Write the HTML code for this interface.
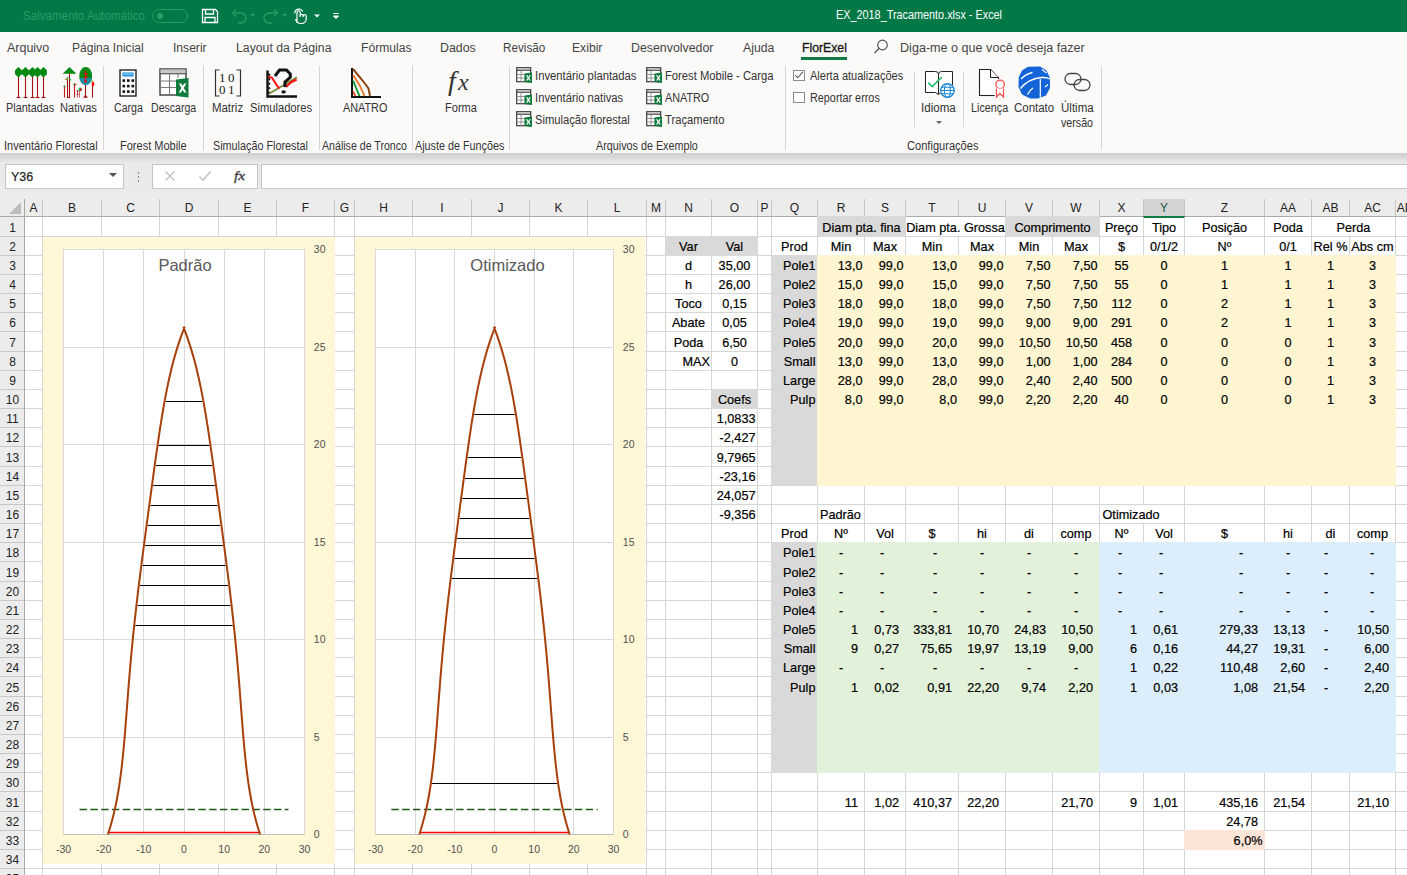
<!DOCTYPE html><html><head><meta charset="utf-8"><style>
html,body{margin:0;padding:0;}
body{width:1407px;height:875px;overflow:hidden;position:relative;background:#fff;font-family:"Liberation Sans",sans-serif;}
#root>div,#root>svg{position:absolute;}
.t{position:absolute;white-space:nowrap;line-height:1;}
</style></head><body><div id="root">

<div style="left:0px;top:0px;width:1407px;height:32px;background:#017846;"></div>
<div class="t" style="left:22.50px;top:9.84px;font-size:12px;color:#23a064;transform:scaleX(0.9677);transform-origin:0 0;">Salvamento Automático</div>
<div style="left:151.5px;top:8.5px;width:36px;height:14.5px;border:1px solid #23a064;border-radius:8px;box-sizing:border-box;"></div>
<div style="left:156.5px;top:13px;width:6px;height:6px;background:#23a064;border-radius:50%;"></div>
<svg style="left:200px;top:7px" width="20" height="18" viewBox="0 0 20 18"><path d="M2.5 2.5h13l2 2v11h-15z" fill="none" stroke="#fff" stroke-width="1.3"/><path d="M5.5 2.5v4.5h8v-4.5" fill="none" stroke="#fff" stroke-width="1.3"/><path d="M5 15.5v-5h10v5" fill="none" stroke="#fff" stroke-width="1.3"/></svg>
<svg style="left:229px;top:7px" width="60" height="18" viewBox="0 0 60 18"><path d="M4 6h8a5 5 0 0 1 0 10h-3" fill="none" stroke="#23a064" stroke-width="1.3"/><path d="M7 2.5L3.5 6 7 9.5" fill="none" stroke="#23a064" stroke-width="1.3"/><path d="M21 7l2.5 3 2.5-3z" fill="#23a064"/><path d="M48 6h-8a5 5 0 0 0 0 10h3" fill="none" stroke="#23a064" stroke-width="1.3"/><path d="M45 2.5L48.5 6 45 9.5" fill="none" stroke="#23a064" stroke-width="1.3"/><path d="M53 7l2.5 3 2.5-3z" fill="#23a064"/></svg>
<svg style="left:292px;top:6px" width="50" height="20" viewBox="0 0 50 20"><path d="M5 17V6.5a1.6 1.6 0 0 1 3.2 0V11m0-1.2a1.5 1.5 0 0 1 3 0V11m0-.8a1.5 1.5 0 0 1 3 0V12.5c0 3-2 5-4.5 5H8.5C6.5 17.5 4 15.5 3.5 13" fill="none" stroke="#fff" stroke-width="1.2"/><path d="M2.8 7.5a4.2 4.2 0 0 1 8-2" fill="none" stroke="#fff" stroke-width="1.2"/><path d="M22 8.5l3 3 3-3z" fill="#fff"/><path d="M41.5 7.5h5M41.5 10l2.5 2.5 2.5-2.5z" fill="#fff" stroke="#fff" stroke-width="1"/></svg>
<div class="t" style="left:836.30px;top:8.84px;font-size:12px;color:#fff;transform:scaleX(0.9039);transform-origin:0 0;">EX_2018_Tracamento.xlsx  -  Excel</div>
<div style="left:0px;top:32px;width:1407px;height:121px;background:#fbfaf9;"></div>
<div class="t" style="left:7.00px;top:41.84px;font-size:12px;color:#444;transform:scaleX(1.0396);transform-origin:0 0;">Arquivo</div>
<div class="t" style="left:72.10px;top:41.84px;font-size:12px;color:#444;transform:scaleX(1.0043);transform-origin:0 0;">Página Inicial</div>
<div class="t" style="left:172.90px;top:41.84px;font-size:12px;color:#444;transform:scaleX(1.0077);transform-origin:0 0;">Inserir</div>
<div class="t" style="left:235.80px;top:41.84px;font-size:12px;color:#444;transform:scaleX(1.0222);transform-origin:0 0;">Layout da Página</div>
<div class="t" style="left:361.20px;top:41.84px;font-size:12px;color:#444;transform:scaleX(1.0097);transform-origin:0 0;">Fórmulas</div>
<div class="t" style="left:440.30px;top:41.84px;font-size:12px;color:#444;transform:scaleX(1.0321);transform-origin:0 0;">Dados</div>
<div class="t" style="left:502.50px;top:41.84px;font-size:12px;color:#444;transform:scaleX(0.9756);transform-origin:0 0;">Revisão</div>
<div class="t" style="left:572.10px;top:41.84px;font-size:12px;color:#444;transform:scaleX(1.0128);transform-origin:0 0;">Exibir</div>
<div class="t" style="left:631.00px;top:41.84px;font-size:12px;color:#444;transform:scaleX(1.0294);transform-origin:0 0;">Desenvolvedor</div>
<div class="t" style="left:743.20px;top:41.84px;font-size:12px;color:#444;transform:scaleX(1.0194);transform-origin:0 0;">Ajuda</div>
<div class="t" style="left:801.50px;top:41.84px;font-size:12px;color:#1a1a1a;transform:scaleX(1.0201);transform-origin:0 0;-webkit-text-stroke:0.35px #1a1a1a;">FlorExel</div>
<div style="left:801px;top:57px;width:46px;height:2.5px;background:#107c41;"></div>
<svg style="left:872px;top:38px" width="18" height="18" viewBox="0 0 18 18"><circle cx="10.5" cy="7" r="4.8" fill="none" stroke="#555" stroke-width="1.2"/><path d="M7 10.5L2.5 15" stroke="#555" stroke-width="1.3"/></svg>
<div class="t" style="left:899.60px;top:41.84px;font-size:12px;color:#444;transform:scaleX(1.0493);transform-origin:0 0;">Diga-me o que você deseja fazer</div>
<div class="t" style="left:6.40px;top:101.74px;font-size:12px;color:#333;transform:scaleX(0.9030);transform-origin:0 0;">Plantadas</div>
<div class="t" style="left:59.80px;top:101.74px;font-size:12px;color:#333;transform:scaleX(0.9221);transform-origin:0 0;">Nativas</div>
<div class="t" style="left:113.70px;top:101.74px;font-size:12px;color:#333;transform:scaleX(0.8841);transform-origin:0 0;">Carga</div>
<div class="t" style="left:150.80px;top:101.74px;font-size:12px;color:#333;transform:scaleX(0.8801);transform-origin:0 0;">Descarga</div>
<div class="t" style="left:212.20px;top:101.74px;font-size:12px;color:#333;transform:scaleX(0.9519);transform-origin:0 0;">Matriz</div>
<div class="t" style="left:250.20px;top:101.74px;font-size:12px;color:#333;transform:scaleX(0.9310);transform-origin:0 0;">Simuladores</div>
<div class="t" style="left:343.40px;top:101.74px;font-size:12px;color:#333;transform:scaleX(0.9038);transform-origin:0 0;">ANATRO</div>
<div class="t" style="left:445.30px;top:101.74px;font-size:12px;color:#333;transform:scaleX(0.9201);transform-origin:0 0;">Forma</div>
<div class="t" style="left:921.40px;top:101.74px;font-size:12px;color:#333;transform:scaleX(0.9658);transform-origin:0 0;">Idioma</div>
<div class="t" style="left:970.80px;top:101.74px;font-size:12px;color:#333;transform:scaleX(0.8991);transform-origin:0 0;">Licença</div>
<div class="t" style="left:1013.80px;top:101.74px;font-size:12px;color:#333;transform:scaleX(0.9541);transform-origin:0 0;">Contato</div>
<div class="t" style="left:1060.70px;top:101.74px;font-size:12px;color:#333;transform:scaleX(0.9613);transform-origin:0 0;">Última</div>
<div class="t" style="left:1061.40px;top:116.64px;font-size:12px;color:#333;transform:scaleX(0.8881);transform-origin:0 0;">versão</div>
<div class="t" style="left:3.70px;top:139.94px;font-size:12px;color:#333;transform:scaleX(0.9182);transform-origin:0 0;">Inventário Florestal</div>
<div class="t" style="left:119.70px;top:139.94px;font-size:12px;color:#333;transform:scaleX(0.9174);transform-origin:0 0;">Forest Mobile</div>
<div class="t" style="left:213.00px;top:139.94px;font-size:12px;color:#333;transform:scaleX(0.8996);transform-origin:0 0;">Simulação Florestal</div>
<div class="t" style="left:322.40px;top:139.94px;font-size:12px;color:#333;transform:scaleX(0.8848);transform-origin:0 0;">Análise de Tronco</div>
<div class="t" style="left:415.40px;top:139.94px;font-size:12px;color:#333;transform:scaleX(0.8993);transform-origin:0 0;">Ajuste de Funções</div>
<div class="t" style="left:595.60px;top:139.94px;font-size:12px;color:#333;transform:scaleX(0.8978);transform-origin:0 0;">Arquivos de Exemplo</div>
<div class="t" style="left:907.00px;top:139.94px;font-size:12px;color:#333;transform:scaleX(0.9239);transform-origin:0 0;">Configurações</div>
<div style="left:103px;top:66px;width:1px;height:84px;background:#d6d6d6;"></div>
<div style="left:203px;top:66px;width:1px;height:84px;background:#d6d6d6;"></div>
<div style="left:319px;top:66px;width:1px;height:84px;background:#d6d6d6;"></div>
<div style="left:412px;top:66px;width:1px;height:84px;background:#d6d6d6;"></div>
<div style="left:509px;top:66px;width:1px;height:84px;background:#d6d6d6;"></div>
<div style="left:785px;top:66px;width:1px;height:84px;background:#d6d6d6;"></div>
<div style="left:1101px;top:66px;width:1px;height:84px;background:#d6d6d6;"></div>
<div style="left:914px;top:71px;width:1px;height:56px;background:#d6d6d6;"></div>
<div style="left:963px;top:71px;width:1px;height:56px;background:#d6d6d6;"></div>
<div class="t" style="left:534.70px;top:69.64px;font-size:12px;color:#333;transform:scaleX(0.9391);transform-origin:0 0;">Inventário plantadas</div>
<div class="t" style="left:534.70px;top:91.74px;font-size:12px;color:#333;transform:scaleX(0.9377);transform-origin:0 0;">Inventário nativas</div>
<div class="t" style="left:534.70px;top:114.04px;font-size:12px;color:#333;transform:scaleX(0.9340);transform-origin:0 0;">Simulação florestal</div>
<div class="t" style="left:664.70px;top:69.64px;font-size:12px;color:#333;transform:scaleX(0.9350);transform-origin:0 0;">Forest Mobile - Carga</div>
<div class="t" style="left:664.70px;top:91.74px;font-size:12px;color:#333;transform:scaleX(0.9018);transform-origin:0 0;">ANATRO</div>
<div class="t" style="left:664.70px;top:114.04px;font-size:12px;color:#333;transform:scaleX(0.9356);transform-origin:0 0;">Traçamento</div>
<div style="left:793px;top:70px;width:12px;height:11px;border:1px solid #8a8a8a;box-sizing:border-box;background:#fff"></div>
<svg style="left:793px;top:69px" width="12" height="12" viewBox="0 0 12 12"><path d="M2.3 6.2l2.5 2.6 5-6" fill="none" stroke="#555" stroke-width="1.1"/></svg>
<div style="left:793px;top:91.5px;width:12px;height:11.5px;border:1px solid #8a8a8a;box-sizing:border-box;background:#fff"></div>
<div class="t" style="left:810.40px;top:69.64px;font-size:12px;color:#333;transform:scaleX(0.9192);transform-origin:0 0;">Alerta atualizações</div>
<div class="t" style="left:810.40px;top:91.74px;font-size:12px;color:#333;transform:scaleX(0.9021);transform-origin:0 0;">Reportar erros</div>
<svg style="left:935px;top:120px" width="8" height="5" viewBox="0 0 8 5"><path d="M1 1h6l-3 3z" fill="#666"/></svg>
<div style="left:0px;top:153px;width:1407px;height:46px;background:#eaeaea;"></div>
<div style="left:0px;top:153px;width:1407px;height:10px;background:linear-gradient(#cdcdcd,#eaeaea);"></div>
<div style="left:5px;top:164px;width:119px;height:25px;background:#fff;border:1px solid #c6c6c6;box-sizing:border-box;"></div>
<div class="t" style="left:11.00px;top:171.42px;font-size:12.5px;color:#222;-webkit-text-stroke:0.2px #222;">Y36</div>
<svg style="left:108px;top:172px" width="10" height="6" viewBox="0 0 10 6"><path d="M1 1h8l-4 4z" fill="#555"/></svg>
<div style="left:137.5px;top:172px;width:1.5px;height:1.5px;background:#888;"></div>
<div style="left:137.5px;top:176px;width:1.5px;height:1.5px;background:#888;"></div>
<div style="left:137.5px;top:180px;width:1.5px;height:1.5px;background:#888;"></div>
<div style="left:152px;top:164px;width:106px;height:25px;background:#fff;border:1px solid #c6c6c6;box-sizing:border-box;"></div>
<svg style="left:164px;top:170px" width="12" height="12" viewBox="0 0 12 12"><path d="M1.5 1.5l9 9M10.5 1.5l-9 9" stroke="#bdbdbd" stroke-width="1.2"/></svg>
<svg style="left:198px;top:170px" width="14" height="12" viewBox="0 0 14 12"><path d="M1.5 6.5l3.5 3.5 7.5-8.5" fill="none" stroke="#c4c4c4" stroke-width="1.6"/></svg>
<div class="t" style="left:234.00px;top:169.07px;font-size:13.5px;color:#3a3a3a;font-family:'Liberation Serif', serif;font-style:italic;transform:scaleX(1.1282);transform-origin:0 0;-webkit-text-stroke:0.3px #3a3a3a;">fx</div>
<div style="left:261px;top:164px;width:1150px;height:25px;background:#fff;border:1px solid #c6c6c6;box-sizing:border-box;"></div>
<div style="left:0px;top:189px;width:1407px;height:28px;background:#ececec;"></div>
<div style="left:0px;top:216px;width:1407px;height:1px;background:#ababab;"></div>
<svg style="left:8px;top:201px" width="14" height="14" viewBox="0 0 14 14"><path d="M13 1v12H1z" fill="#bcbcbc"/></svg>
<div style="left:1143px;top:199px;width:42px;height:17px;background:#d4d4d4;"></div>
<div style="left:1143px;top:216px;width:42px;height:2px;background:#107c41;"></div>
<div style="left:24px;top:199px;width:1px;height:17px;background:#c8c8c8;"></div>
<div style="left:42px;top:199px;width:1px;height:17px;background:#c8c8c8;"></div>
<div style="left:101px;top:199px;width:1px;height:17px;background:#c8c8c8;"></div>
<div style="left:159px;top:199px;width:1px;height:17px;background:#c8c8c8;"></div>
<div style="left:218px;top:199px;width:1px;height:17px;background:#c8c8c8;"></div>
<div style="left:276px;top:199px;width:1px;height:17px;background:#c8c8c8;"></div>
<div style="left:334px;top:199px;width:1px;height:17px;background:#c8c8c8;"></div>
<div style="left:354px;top:199px;width:1px;height:17px;background:#c8c8c8;"></div>
<div style="left:412px;top:199px;width:1px;height:17px;background:#c8c8c8;"></div>
<div style="left:471px;top:199px;width:1px;height:17px;background:#c8c8c8;"></div>
<div style="left:529px;top:199px;width:1px;height:17px;background:#c8c8c8;"></div>
<div style="left:587px;top:199px;width:1px;height:17px;background:#c8c8c8;"></div>
<div style="left:646px;top:199px;width:1px;height:17px;background:#c8c8c8;"></div>
<div style="left:665px;top:199px;width:1px;height:17px;background:#c8c8c8;"></div>
<div style="left:711px;top:199px;width:1px;height:17px;background:#c8c8c8;"></div>
<div style="left:757px;top:199px;width:1px;height:17px;background:#c8c8c8;"></div>
<div style="left:771px;top:199px;width:1px;height:17px;background:#c8c8c8;"></div>
<div style="left:817px;top:199px;width:1px;height:17px;background:#c8c8c8;"></div>
<div style="left:864px;top:199px;width:1px;height:17px;background:#c8c8c8;"></div>
<div style="left:905px;top:199px;width:1px;height:17px;background:#c8c8c8;"></div>
<div style="left:958px;top:199px;width:1px;height:17px;background:#c8c8c8;"></div>
<div style="left:1005px;top:199px;width:1px;height:17px;background:#c8c8c8;"></div>
<div style="left:1052px;top:199px;width:1px;height:17px;background:#c8c8c8;"></div>
<div style="left:1099px;top:199px;width:1px;height:17px;background:#c8c8c8;"></div>
<div style="left:1143px;top:199px;width:1px;height:17px;background:#c8c8c8;"></div>
<div style="left:1184px;top:199px;width:1px;height:17px;background:#c8c8c8;"></div>
<div style="left:1264px;top:199px;width:1px;height:17px;background:#c8c8c8;"></div>
<div style="left:1311px;top:199px;width:1px;height:17px;background:#c8c8c8;"></div>
<div style="left:1349px;top:199px;width:1px;height:17px;background:#c8c8c8;"></div>
<div style="left:1395px;top:199px;width:1px;height:17px;background:#c8c8c8;"></div>
<div class="t" style="left:29.49px;top:201.84px;font-size:12px;color:#222;">A</div>
<div class="t" style="left:67.99px;top:201.84px;font-size:12px;color:#222;">B</div>
<div class="t" style="left:126.16px;top:201.84px;font-size:12px;color:#222;">C</div>
<div class="t" style="left:184.66px;top:201.84px;font-size:12px;color:#222;">D</div>
<div class="t" style="left:243.49px;top:201.84px;font-size:12px;color:#222;">E</div>
<div class="t" style="left:301.83px;top:201.84px;font-size:12px;color:#222;">F</div>
<div class="t" style="left:339.83px;top:201.84px;font-size:12px;color:#222;">G</div>
<div class="t" style="left:379.16px;top:201.84px;font-size:12px;color:#222;">H</div>
<div class="t" style="left:440.33px;top:201.84px;font-size:12px;color:#222;">I</div>
<div class="t" style="left:497.50px;top:201.84px;font-size:12px;color:#222;">J</div>
<div class="t" style="left:554.49px;top:201.84px;font-size:12px;color:#222;">K</div>
<div class="t" style="left:613.66px;top:201.84px;font-size:12px;color:#222;">L</div>
<div class="t" style="left:651.00px;top:201.84px;font-size:12px;color:#222;">M</div>
<div class="t" style="left:684.16px;top:201.84px;font-size:12px;color:#222;">N</div>
<div class="t" style="left:729.83px;top:201.84px;font-size:12px;color:#222;">O</div>
<div class="t" style="left:760.49px;top:201.84px;font-size:12px;color:#222;">P</div>
<div class="t" style="left:789.83px;top:201.84px;font-size:12px;color:#222;">Q</div>
<div class="t" style="left:836.66px;top:201.84px;font-size:12px;color:#222;">R</div>
<div class="t" style="left:880.99px;top:201.84px;font-size:12px;color:#222;">S</div>
<div class="t" style="left:928.33px;top:201.84px;font-size:12px;color:#222;">T</div>
<div class="t" style="left:977.66px;top:201.84px;font-size:12px;color:#222;">U</div>
<div class="t" style="left:1024.99px;top:201.84px;font-size:12px;color:#222;">V</div>
<div class="t" style="left:1070.34px;top:201.84px;font-size:12px;color:#222;">W</div>
<div class="t" style="left:1117.49px;top:201.84px;font-size:12px;color:#222;">X</div>
<div class="t" style="left:1159.99px;top:201.84px;font-size:12px;color:#145c38;">Y</div>
<div class="t" style="left:1220.83px;top:201.84px;font-size:12px;color:#222;">Z</div>
<div class="t" style="left:1279.99px;top:201.84px;font-size:12px;color:#222;">AA</div>
<div class="t" style="left:1322.49px;top:201.84px;font-size:12px;color:#222;">AB</div>
<div class="t" style="left:1364.16px;top:201.84px;font-size:12px;color:#222;">AC</div>
<div class="t" style="left:1396.66px;top:201.84px;font-size:12px;color:#222;">AD</div>
<div style="left:0px;top:217px;width:24px;height:660px;background:#ececec;"></div>
<div style="left:24px;top:199px;width:1px;height:680px;background:#a6a6a6;"></div>
<div style="left:0px;top:236px;width:24px;height:1px;background:#c8c8c8;"></div>
<div class="t" style="left:9.16px;top:221.84px;font-size:12px;color:#222;">1</div>
<div style="left:0px;top:255px;width:24px;height:1px;background:#c8c8c8;"></div>
<div class="t" style="left:9.16px;top:240.84px;font-size:12px;color:#222;">2</div>
<div style="left:0px;top:274px;width:24px;height:1px;background:#c8c8c8;"></div>
<div class="t" style="left:9.16px;top:259.84px;font-size:12px;color:#222;">3</div>
<div style="left:0px;top:293px;width:24px;height:1px;background:#c8c8c8;"></div>
<div class="t" style="left:9.16px;top:278.84px;font-size:12px;color:#222;">4</div>
<div style="left:0px;top:312px;width:24px;height:1px;background:#c8c8c8;"></div>
<div class="t" style="left:9.16px;top:297.84px;font-size:12px;color:#222;">5</div>
<div style="left:0px;top:331px;width:24px;height:1px;background:#c8c8c8;"></div>
<div class="t" style="left:9.16px;top:316.84px;font-size:12px;color:#222;">6</div>
<div style="left:0px;top:351px;width:24px;height:1px;background:#c8c8c8;"></div>
<div class="t" style="left:9.16px;top:336.84px;font-size:12px;color:#222;">7</div>
<div style="left:0px;top:370px;width:24px;height:1px;background:#c8c8c8;"></div>
<div class="t" style="left:9.16px;top:355.84px;font-size:12px;color:#222;">8</div>
<div style="left:0px;top:389px;width:24px;height:1px;background:#c8c8c8;"></div>
<div class="t" style="left:9.16px;top:374.84px;font-size:12px;color:#222;">9</div>
<div style="left:0px;top:408px;width:24px;height:1px;background:#c8c8c8;"></div>
<div class="t" style="left:5.82px;top:393.84px;font-size:12px;color:#222;">10</div>
<div style="left:0px;top:427px;width:24px;height:1px;background:#c8c8c8;"></div>
<div class="t" style="left:6.27px;top:412.84px;font-size:12px;color:#222;">11</div>
<div style="left:0px;top:446px;width:24px;height:1px;background:#c8c8c8;"></div>
<div class="t" style="left:5.82px;top:431.84px;font-size:12px;color:#222;">12</div>
<div style="left:0px;top:466px;width:24px;height:1px;background:#c8c8c8;"></div>
<div class="t" style="left:5.82px;top:451.84px;font-size:12px;color:#222;">13</div>
<div style="left:0px;top:485px;width:24px;height:1px;background:#c8c8c8;"></div>
<div class="t" style="left:5.82px;top:470.84px;font-size:12px;color:#222;">14</div>
<div style="left:0px;top:504px;width:24px;height:1px;background:#c8c8c8;"></div>
<div class="t" style="left:5.82px;top:489.84px;font-size:12px;color:#222;">15</div>
<div style="left:0px;top:523px;width:24px;height:1px;background:#c8c8c8;"></div>
<div class="t" style="left:5.82px;top:508.84px;font-size:12px;color:#222;">16</div>
<div style="left:0px;top:542px;width:24px;height:1px;background:#c8c8c8;"></div>
<div class="t" style="left:5.82px;top:527.84px;font-size:12px;color:#222;">17</div>
<div style="left:0px;top:561px;width:24px;height:1px;background:#c8c8c8;"></div>
<div class="t" style="left:5.82px;top:546.84px;font-size:12px;color:#222;">18</div>
<div style="left:0px;top:581px;width:24px;height:1px;background:#c8c8c8;"></div>
<div class="t" style="left:5.82px;top:566.84px;font-size:12px;color:#222;">19</div>
<div style="left:0px;top:600px;width:24px;height:1px;background:#c8c8c8;"></div>
<div class="t" style="left:5.82px;top:585.84px;font-size:12px;color:#222;">20</div>
<div style="left:0px;top:619px;width:24px;height:1px;background:#c8c8c8;"></div>
<div class="t" style="left:5.82px;top:604.84px;font-size:12px;color:#222;">21</div>
<div style="left:0px;top:638px;width:24px;height:1px;background:#c8c8c8;"></div>
<div class="t" style="left:5.82px;top:623.84px;font-size:12px;color:#222;">22</div>
<div style="left:0px;top:657px;width:24px;height:1px;background:#c8c8c8;"></div>
<div class="t" style="left:5.82px;top:642.84px;font-size:12px;color:#222;">23</div>
<div style="left:0px;top:676px;width:24px;height:1px;background:#c8c8c8;"></div>
<div class="t" style="left:5.82px;top:661.84px;font-size:12px;color:#222;">24</div>
<div style="left:0px;top:696px;width:24px;height:1px;background:#c8c8c8;"></div>
<div class="t" style="left:5.82px;top:681.84px;font-size:12px;color:#222;">25</div>
<div style="left:0px;top:715px;width:24px;height:1px;background:#c8c8c8;"></div>
<div class="t" style="left:5.82px;top:700.84px;font-size:12px;color:#222;">26</div>
<div style="left:0px;top:734px;width:24px;height:1px;background:#c8c8c8;"></div>
<div class="t" style="left:5.82px;top:719.84px;font-size:12px;color:#222;">27</div>
<div style="left:0px;top:753px;width:24px;height:1px;background:#c8c8c8;"></div>
<div class="t" style="left:5.82px;top:738.84px;font-size:12px;color:#222;">28</div>
<div style="left:0px;top:772px;width:24px;height:1px;background:#c8c8c8;"></div>
<div class="t" style="left:5.82px;top:757.84px;font-size:12px;color:#222;">29</div>
<div style="left:0px;top:791px;width:24px;height:1px;background:#c8c8c8;"></div>
<div class="t" style="left:5.82px;top:776.84px;font-size:12px;color:#222;">30</div>
<div style="left:0px;top:811px;width:24px;height:1px;background:#c8c8c8;"></div>
<div class="t" style="left:5.82px;top:796.84px;font-size:12px;color:#222;">31</div>
<div style="left:0px;top:830px;width:24px;height:1px;background:#c8c8c8;"></div>
<div class="t" style="left:5.82px;top:815.84px;font-size:12px;color:#222;">32</div>
<div style="left:0px;top:849px;width:24px;height:1px;background:#c8c8c8;"></div>
<div class="t" style="left:5.82px;top:834.84px;font-size:12px;color:#222;">33</div>
<div style="left:0px;top:868px;width:24px;height:1px;background:#c8c8c8;"></div>
<div class="t" style="left:5.82px;top:853.84px;font-size:12px;color:#222;">34</div>
<div style="left:0px;top:887px;width:24px;height:1px;background:#c8c8c8;"></div>
<div class="t" style="left:5.82px;top:872.84px;font-size:12px;color:#222;">35</div>
<div style="left:42px;top:217px;width:1px;height:658px;background:#d6d6d6;"></div>
<div style="left:101px;top:217px;width:1px;height:658px;background:#d6d6d6;"></div>
<div style="left:159px;top:217px;width:1px;height:658px;background:#d6d6d6;"></div>
<div style="left:218px;top:217px;width:1px;height:658px;background:#d6d6d6;"></div>
<div style="left:276px;top:217px;width:1px;height:658px;background:#d6d6d6;"></div>
<div style="left:334px;top:217px;width:1px;height:658px;background:#d6d6d6;"></div>
<div style="left:354px;top:217px;width:1px;height:658px;background:#d6d6d6;"></div>
<div style="left:412px;top:217px;width:1px;height:658px;background:#d6d6d6;"></div>
<div style="left:471px;top:217px;width:1px;height:658px;background:#d6d6d6;"></div>
<div style="left:529px;top:217px;width:1px;height:658px;background:#d6d6d6;"></div>
<div style="left:587px;top:217px;width:1px;height:658px;background:#d6d6d6;"></div>
<div style="left:646px;top:217px;width:1px;height:658px;background:#d6d6d6;"></div>
<div style="left:665px;top:217px;width:1px;height:658px;background:#d6d6d6;"></div>
<div style="left:711px;top:217px;width:1px;height:658px;background:#d6d6d6;"></div>
<div style="left:757px;top:217px;width:1px;height:658px;background:#d6d6d6;"></div>
<div style="left:771px;top:217px;width:1px;height:658px;background:#d6d6d6;"></div>
<div style="left:817px;top:217px;width:1px;height:658px;background:#d6d6d6;"></div>
<div style="left:864px;top:217px;width:1px;height:658px;background:#d6d6d6;"></div>
<div style="left:905px;top:217px;width:1px;height:658px;background:#d6d6d6;"></div>
<div style="left:958px;top:217px;width:1px;height:658px;background:#d6d6d6;"></div>
<div style="left:1005px;top:217px;width:1px;height:658px;background:#d6d6d6;"></div>
<div style="left:1052px;top:217px;width:1px;height:658px;background:#d6d6d6;"></div>
<div style="left:1099px;top:217px;width:1px;height:658px;background:#d6d6d6;"></div>
<div style="left:1143px;top:217px;width:1px;height:658px;background:#d6d6d6;"></div>
<div style="left:1184px;top:217px;width:1px;height:658px;background:#d6d6d6;"></div>
<div style="left:1264px;top:217px;width:1px;height:658px;background:#d6d6d6;"></div>
<div style="left:1311px;top:217px;width:1px;height:658px;background:#d6d6d6;"></div>
<div style="left:1349px;top:217px;width:1px;height:658px;background:#d6d6d6;"></div>
<div style="left:1395px;top:217px;width:1px;height:658px;background:#d6d6d6;"></div>
<div style="left:1450px;top:217px;width:1px;height:658px;background:#d6d6d6;"></div>
<div style="left:25px;top:236px;width:1382px;height:1px;background:#d6d6d6;"></div>
<div style="left:25px;top:255px;width:1382px;height:1px;background:#d6d6d6;"></div>
<div style="left:25px;top:274px;width:1382px;height:1px;background:#d6d6d6;"></div>
<div style="left:25px;top:293px;width:1382px;height:1px;background:#d6d6d6;"></div>
<div style="left:25px;top:312px;width:1382px;height:1px;background:#d6d6d6;"></div>
<div style="left:25px;top:331px;width:1382px;height:1px;background:#d6d6d6;"></div>
<div style="left:25px;top:351px;width:1382px;height:1px;background:#d6d6d6;"></div>
<div style="left:25px;top:370px;width:1382px;height:1px;background:#d6d6d6;"></div>
<div style="left:25px;top:389px;width:1382px;height:1px;background:#d6d6d6;"></div>
<div style="left:25px;top:408px;width:1382px;height:1px;background:#d6d6d6;"></div>
<div style="left:25px;top:427px;width:1382px;height:1px;background:#d6d6d6;"></div>
<div style="left:25px;top:446px;width:1382px;height:1px;background:#d6d6d6;"></div>
<div style="left:25px;top:466px;width:1382px;height:1px;background:#d6d6d6;"></div>
<div style="left:25px;top:485px;width:1382px;height:1px;background:#d6d6d6;"></div>
<div style="left:25px;top:504px;width:1382px;height:1px;background:#d6d6d6;"></div>
<div style="left:25px;top:523px;width:1382px;height:1px;background:#d6d6d6;"></div>
<div style="left:25px;top:542px;width:1382px;height:1px;background:#d6d6d6;"></div>
<div style="left:25px;top:561px;width:1382px;height:1px;background:#d6d6d6;"></div>
<div style="left:25px;top:581px;width:1382px;height:1px;background:#d6d6d6;"></div>
<div style="left:25px;top:600px;width:1382px;height:1px;background:#d6d6d6;"></div>
<div style="left:25px;top:619px;width:1382px;height:1px;background:#d6d6d6;"></div>
<div style="left:25px;top:638px;width:1382px;height:1px;background:#d6d6d6;"></div>
<div style="left:25px;top:657px;width:1382px;height:1px;background:#d6d6d6;"></div>
<div style="left:25px;top:676px;width:1382px;height:1px;background:#d6d6d6;"></div>
<div style="left:25px;top:696px;width:1382px;height:1px;background:#d6d6d6;"></div>
<div style="left:25px;top:715px;width:1382px;height:1px;background:#d6d6d6;"></div>
<div style="left:25px;top:734px;width:1382px;height:1px;background:#d6d6d6;"></div>
<div style="left:25px;top:753px;width:1382px;height:1px;background:#d6d6d6;"></div>
<div style="left:25px;top:772px;width:1382px;height:1px;background:#d6d6d6;"></div>
<div style="left:25px;top:791px;width:1382px;height:1px;background:#d6d6d6;"></div>
<div style="left:25px;top:811px;width:1382px;height:1px;background:#d6d6d6;"></div>
<div style="left:25px;top:830px;width:1382px;height:1px;background:#d6d6d6;"></div>
<div style="left:25px;top:849px;width:1382px;height:1px;background:#d6d6d6;"></div>
<div style="left:25px;top:868px;width:1382px;height:1px;background:#d6d6d6;"></div>
<div style="left:25px;top:887px;width:1382px;height:1px;background:#d6d6d6;"></div>
<div style="left:665px;top:236px;width:93px;height:20px;background:#d9d9d9;"></div>
<div style="left:711px;top:389px;width:47px;height:20px;background:#d9d9d9;"></div>
<div style="left:817px;top:216px;width:89px;height:21px;background:#d9d9d9;"></div>
<div style="left:1005px;top:216px;width:95px;height:21px;background:#d9d9d9;"></div>
<div style="left:958px;top:217px;width:1px;height:18px;background:#fff;"></div>
<div style="left:1349px;top:217px;width:1px;height:18px;background:#fff;"></div>
<div style="left:771px;top:255px;width:47px;height:231px;background:#d9d9d9;"></div>
<div style="left:817px;top:255px;width:579px;height:231px;background:#fff6d1;"></div>
<div style="left:771px;top:542px;width:47px;height:231px;background:#d9d9d9;"></div>
<div style="left:817px;top:542px;width:283px;height:231px;background:#e2f1d9;"></div>
<div style="left:1099px;top:542px;width:297px;height:231px;background:#dceefb;"></div>
<div style="left:1184px;top:830px;width:81px;height:20px;background:#fce4d6;"></div>
<div style="left:1143px;top:505px;width:1px;height:18px;background:#fff;"></div>
<div class="t" style="left:679.09px;top:240.75px;font-size:12.7px;color:#000;-webkit-text-stroke:0.2px #000;">Var</div>
<div class="t" style="left:725.80px;top:240.75px;font-size:12.7px;color:#000;-webkit-text-stroke:0.2px #000;">Val</div>
<div class="t" style="left:684.97px;top:259.75px;font-size:12.7px;color:#000;-webkit-text-stroke:0.2px #000;">d</div>
<div class="t" style="left:718.62px;top:259.75px;font-size:12.7px;color:#000;-webkit-text-stroke:0.2px #000;">35,00</div>
<div class="t" style="left:684.97px;top:278.75px;font-size:12.7px;color:#000;-webkit-text-stroke:0.2px #000;">h</div>
<div class="t" style="left:718.62px;top:278.75px;font-size:12.7px;color:#000;-webkit-text-stroke:0.2px #000;">26,00</div>
<div class="t" style="left:675.09px;top:297.75px;font-size:12.7px;color:#000;-webkit-text-stroke:0.2px #000;">Toco</div>
<div class="t" style="left:722.15px;top:297.75px;font-size:12.7px;color:#000;-webkit-text-stroke:0.2px #000;">0,15</div>
<div class="t" style="left:671.92px;top:316.75px;font-size:12.7px;color:#000;-webkit-text-stroke:0.2px #000;">Abate</div>
<div class="t" style="left:722.15px;top:316.75px;font-size:12.7px;color:#000;-webkit-text-stroke:0.2px #000;">0,05</div>
<div class="t" style="left:673.68px;top:336.75px;font-size:12.7px;color:#000;-webkit-text-stroke:0.2px #000;">Poda</div>
<div class="t" style="left:722.15px;top:336.75px;font-size:12.7px;color:#000;-webkit-text-stroke:0.2px #000;">6,50</div>
<div class="t" style="left:682.50px;top:355.75px;font-size:12.7px;color:#000;-webkit-text-stroke:0.2px #000;">MAX</div>
<div class="t" style="left:730.97px;top:355.75px;font-size:12.7px;color:#000;-webkit-text-stroke:0.2px #000;">0</div>
<div class="t" style="left:717.92px;top:393.75px;font-size:12.7px;color:#000;-webkit-text-stroke:0.2px #000;">Coefs</div>
<div class="t" style="left:716.69px;top:412.75px;font-size:12.7px;color:#000;-webkit-text-stroke:0.2px #000;">1,0833</div>
<div class="t" style="left:719.52px;top:431.75px;font-size:12.7px;color:#000;-webkit-text-stroke:0.2px #000;">-2,427</div>
<div class="t" style="left:716.69px;top:451.75px;font-size:12.7px;color:#000;-webkit-text-stroke:0.2px #000;">9,7965</div>
<div class="t" style="left:719.52px;top:470.75px;font-size:12.7px;color:#000;-webkit-text-stroke:0.2px #000;">-23,16</div>
<div class="t" style="left:716.69px;top:489.75px;font-size:12.7px;color:#000;-webkit-text-stroke:0.2px #000;">24,057</div>
<div class="t" style="left:719.52px;top:508.75px;font-size:12.7px;color:#000;-webkit-text-stroke:0.2px #000;">-9,356</div>
<div class="t" style="left:822.36px;top:221.75px;font-size:12.7px;color:#000;-webkit-text-stroke:0.2px #000;">Diam pta. fina</div>
<div class="t" style="left:906.14px;top:221.75px;font-size:12.7px;color:#000;-webkit-text-stroke:0.2px #000;">Diam pta. Grossa</div>
<div class="t" style="left:1014.42px;top:221.75px;font-size:12.7px;color:#000;-webkit-text-stroke:0.2px #000;">Comprimento</div>
<div class="t" style="left:1104.92px;top:221.75px;font-size:12.7px;color:#000;-webkit-text-stroke:0.2px #000;">Preço</div>
<div class="t" style="left:1151.89px;top:221.75px;font-size:12.7px;color:#000;-webkit-text-stroke:0.2px #000;">Tipo</div>
<div class="t" style="left:1201.93px;top:221.75px;font-size:12.7px;color:#000;-webkit-text-stroke:0.2px #000;">Posição</div>
<div class="t" style="left:1273.18px;top:221.75px;font-size:12.7px;color:#000;-webkit-text-stroke:0.2px #000;">Poda</div>
<div class="t" style="left:1336.57px;top:221.75px;font-size:12.7px;color:#000;-webkit-text-stroke:0.2px #000;">Perda</div>
<div class="t" style="left:781.09px;top:240.75px;font-size:12.7px;color:#000;-webkit-text-stroke:0.2px #000;">Prod</div>
<div class="t" style="left:830.77px;top:240.75px;font-size:12.7px;color:#000;-webkit-text-stroke:0.2px #000;">Min</div>
<div class="t" style="left:873.02px;top:240.75px;font-size:12.7px;color:#000;-webkit-text-stroke:0.2px #000;">Max</div>
<div class="t" style="left:921.77px;top:240.75px;font-size:12.7px;color:#000;-webkit-text-stroke:0.2px #000;">Min</div>
<div class="t" style="left:970.02px;top:240.75px;font-size:12.7px;color:#000;-webkit-text-stroke:0.2px #000;">Max</div>
<div class="t" style="left:1018.77px;top:240.75px;font-size:12.7px;color:#000;-webkit-text-stroke:0.2px #000;">Min</div>
<div class="t" style="left:1064.02px;top:240.75px;font-size:12.7px;color:#000;-webkit-text-stroke:0.2px #000;">Max</div>
<div class="t" style="left:1117.97px;top:240.75px;font-size:12.7px;color:#000;-webkit-text-stroke:0.2px #000;">$</div>
<div class="t" style="left:1149.89px;top:240.75px;font-size:12.7px;color:#000;-webkit-text-stroke:0.2px #000;">0/1/2</div>
<div class="t" style="left:1217.60px;top:240.75px;font-size:12.7px;color:#000;-webkit-text-stroke:0.2px #000;">Nº</div>
<div class="t" style="left:1279.18px;top:240.75px;font-size:12.7px;color:#000;-webkit-text-stroke:0.2px #000;">0/1</div>
<div class="t" style="left:1313.58px;top:240.75px;font-size:12.7px;color:#000;-webkit-text-stroke:0.2px #000;">Rel %</div>
<div class="t" style="left:1351.34px;top:240.75px;font-size:12.7px;color:#000;-webkit-text-stroke:0.2px #000;">Abs cm</div>
<div class="t" style="left:783.05px;top:259.75px;font-size:12.7px;color:#000;-webkit-text-stroke:0.2px #000;">Pole1</div>
<div class="t" style="left:837.80px;top:259.75px;font-size:12.7px;color:#000;-webkit-text-stroke:0.2px #000;">13,0</div>
<div class="t" style="left:878.80px;top:259.75px;font-size:12.7px;color:#000;-webkit-text-stroke:0.2px #000;">99,0</div>
<div class="t" style="left:932.30px;top:259.75px;font-size:12.7px;color:#000;-webkit-text-stroke:0.2px #000;">13,0</div>
<div class="t" style="left:978.80px;top:259.75px;font-size:12.7px;color:#000;-webkit-text-stroke:0.2px #000;">99,0</div>
<div class="t" style="left:1025.80px;top:259.75px;font-size:12.7px;color:#000;-webkit-text-stroke:0.2px #000;">7,50</div>
<div class="t" style="left:1072.80px;top:259.75px;font-size:12.7px;color:#000;-webkit-text-stroke:0.2px #000;">7,50</div>
<div class="t" style="left:1114.44px;top:259.75px;font-size:12.7px;color:#000;-webkit-text-stroke:0.2px #000;">55</div>
<div class="t" style="left:1160.47px;top:259.75px;font-size:12.7px;color:#000;-webkit-text-stroke:0.2px #000;">0</div>
<div class="t" style="left:1220.97px;top:259.75px;font-size:12.7px;color:#000;-webkit-text-stroke:0.2px #000;">1</div>
<div class="t" style="left:1284.47px;top:259.75px;font-size:12.7px;color:#000;-webkit-text-stroke:0.2px #000;">1</div>
<div class="t" style="left:1326.97px;top:259.75px;font-size:12.7px;color:#000;-webkit-text-stroke:0.2px #000;">1</div>
<div class="t" style="left:1368.97px;top:259.75px;font-size:12.7px;color:#000;-webkit-text-stroke:0.2px #000;">3</div>
<div class="t" style="left:783.05px;top:278.75px;font-size:12.7px;color:#000;-webkit-text-stroke:0.2px #000;">Pole2</div>
<div class="t" style="left:837.80px;top:278.75px;font-size:12.7px;color:#000;-webkit-text-stroke:0.2px #000;">15,0</div>
<div class="t" style="left:878.80px;top:278.75px;font-size:12.7px;color:#000;-webkit-text-stroke:0.2px #000;">99,0</div>
<div class="t" style="left:932.30px;top:278.75px;font-size:12.7px;color:#000;-webkit-text-stroke:0.2px #000;">15,0</div>
<div class="t" style="left:978.80px;top:278.75px;font-size:12.7px;color:#000;-webkit-text-stroke:0.2px #000;">99,0</div>
<div class="t" style="left:1025.80px;top:278.75px;font-size:12.7px;color:#000;-webkit-text-stroke:0.2px #000;">7,50</div>
<div class="t" style="left:1072.80px;top:278.75px;font-size:12.7px;color:#000;-webkit-text-stroke:0.2px #000;">7,50</div>
<div class="t" style="left:1114.44px;top:278.75px;font-size:12.7px;color:#000;-webkit-text-stroke:0.2px #000;">55</div>
<div class="t" style="left:1160.47px;top:278.75px;font-size:12.7px;color:#000;-webkit-text-stroke:0.2px #000;">0</div>
<div class="t" style="left:1220.97px;top:278.75px;font-size:12.7px;color:#000;-webkit-text-stroke:0.2px #000;">1</div>
<div class="t" style="left:1284.47px;top:278.75px;font-size:12.7px;color:#000;-webkit-text-stroke:0.2px #000;">1</div>
<div class="t" style="left:1326.97px;top:278.75px;font-size:12.7px;color:#000;-webkit-text-stroke:0.2px #000;">1</div>
<div class="t" style="left:1368.97px;top:278.75px;font-size:12.7px;color:#000;-webkit-text-stroke:0.2px #000;">3</div>
<div class="t" style="left:783.05px;top:297.75px;font-size:12.7px;color:#000;-webkit-text-stroke:0.2px #000;">Pole3</div>
<div class="t" style="left:837.80px;top:297.75px;font-size:12.7px;color:#000;-webkit-text-stroke:0.2px #000;">18,0</div>
<div class="t" style="left:878.80px;top:297.75px;font-size:12.7px;color:#000;-webkit-text-stroke:0.2px #000;">99,0</div>
<div class="t" style="left:932.30px;top:297.75px;font-size:12.7px;color:#000;-webkit-text-stroke:0.2px #000;">18,0</div>
<div class="t" style="left:978.80px;top:297.75px;font-size:12.7px;color:#000;-webkit-text-stroke:0.2px #000;">99,0</div>
<div class="t" style="left:1025.80px;top:297.75px;font-size:12.7px;color:#000;-webkit-text-stroke:0.2px #000;">7,50</div>
<div class="t" style="left:1072.80px;top:297.75px;font-size:12.7px;color:#000;-webkit-text-stroke:0.2px #000;">7,50</div>
<div class="t" style="left:1111.38px;top:297.75px;font-size:12.7px;color:#000;-webkit-text-stroke:0.2px #000;">112</div>
<div class="t" style="left:1160.47px;top:297.75px;font-size:12.7px;color:#000;-webkit-text-stroke:0.2px #000;">0</div>
<div class="t" style="left:1220.97px;top:297.75px;font-size:12.7px;color:#000;-webkit-text-stroke:0.2px #000;">2</div>
<div class="t" style="left:1284.47px;top:297.75px;font-size:12.7px;color:#000;-webkit-text-stroke:0.2px #000;">1</div>
<div class="t" style="left:1326.97px;top:297.75px;font-size:12.7px;color:#000;-webkit-text-stroke:0.2px #000;">1</div>
<div class="t" style="left:1368.97px;top:297.75px;font-size:12.7px;color:#000;-webkit-text-stroke:0.2px #000;">3</div>
<div class="t" style="left:783.05px;top:316.75px;font-size:12.7px;color:#000;-webkit-text-stroke:0.2px #000;">Pole4</div>
<div class="t" style="left:837.80px;top:316.75px;font-size:12.7px;color:#000;-webkit-text-stroke:0.2px #000;">19,0</div>
<div class="t" style="left:878.80px;top:316.75px;font-size:12.7px;color:#000;-webkit-text-stroke:0.2px #000;">99,0</div>
<div class="t" style="left:932.30px;top:316.75px;font-size:12.7px;color:#000;-webkit-text-stroke:0.2px #000;">19,0</div>
<div class="t" style="left:978.80px;top:316.75px;font-size:12.7px;color:#000;-webkit-text-stroke:0.2px #000;">99,0</div>
<div class="t" style="left:1025.80px;top:316.75px;font-size:12.7px;color:#000;-webkit-text-stroke:0.2px #000;">9,00</div>
<div class="t" style="left:1072.80px;top:316.75px;font-size:12.7px;color:#000;-webkit-text-stroke:0.2px #000;">9,00</div>
<div class="t" style="left:1110.91px;top:316.75px;font-size:12.7px;color:#000;-webkit-text-stroke:0.2px #000;">291</div>
<div class="t" style="left:1160.47px;top:316.75px;font-size:12.7px;color:#000;-webkit-text-stroke:0.2px #000;">0</div>
<div class="t" style="left:1220.97px;top:316.75px;font-size:12.7px;color:#000;-webkit-text-stroke:0.2px #000;">2</div>
<div class="t" style="left:1284.47px;top:316.75px;font-size:12.7px;color:#000;-webkit-text-stroke:0.2px #000;">1</div>
<div class="t" style="left:1326.97px;top:316.75px;font-size:12.7px;color:#000;-webkit-text-stroke:0.2px #000;">1</div>
<div class="t" style="left:1368.97px;top:316.75px;font-size:12.7px;color:#000;-webkit-text-stroke:0.2px #000;">3</div>
<div class="t" style="left:783.05px;top:336.75px;font-size:12.7px;color:#000;-webkit-text-stroke:0.2px #000;">Pole5</div>
<div class="t" style="left:837.80px;top:336.75px;font-size:12.7px;color:#000;-webkit-text-stroke:0.2px #000;">20,0</div>
<div class="t" style="left:878.80px;top:336.75px;font-size:12.7px;color:#000;-webkit-text-stroke:0.2px #000;">99,0</div>
<div class="t" style="left:932.30px;top:336.75px;font-size:12.7px;color:#000;-webkit-text-stroke:0.2px #000;">20,0</div>
<div class="t" style="left:978.80px;top:336.75px;font-size:12.7px;color:#000;-webkit-text-stroke:0.2px #000;">99,0</div>
<div class="t" style="left:1018.75px;top:336.75px;font-size:12.7px;color:#000;-webkit-text-stroke:0.2px #000;">10,50</div>
<div class="t" style="left:1065.75px;top:336.75px;font-size:12.7px;color:#000;-webkit-text-stroke:0.2px #000;">10,50</div>
<div class="t" style="left:1110.91px;top:336.75px;font-size:12.7px;color:#000;-webkit-text-stroke:0.2px #000;">458</div>
<div class="t" style="left:1160.47px;top:336.75px;font-size:12.7px;color:#000;-webkit-text-stroke:0.2px #000;">0</div>
<div class="t" style="left:1220.97px;top:336.75px;font-size:12.7px;color:#000;-webkit-text-stroke:0.2px #000;">0</div>
<div class="t" style="left:1284.47px;top:336.75px;font-size:12.7px;color:#000;-webkit-text-stroke:0.2px #000;">0</div>
<div class="t" style="left:1326.97px;top:336.75px;font-size:12.7px;color:#000;-webkit-text-stroke:0.2px #000;">1</div>
<div class="t" style="left:1368.97px;top:336.75px;font-size:12.7px;color:#000;-webkit-text-stroke:0.2px #000;">3</div>
<div class="t" style="left:783.77px;top:355.75px;font-size:12.7px;color:#000;-webkit-text-stroke:0.2px #000;">Small</div>
<div class="t" style="left:837.80px;top:355.75px;font-size:12.7px;color:#000;-webkit-text-stroke:0.2px #000;">13,0</div>
<div class="t" style="left:878.80px;top:355.75px;font-size:12.7px;color:#000;-webkit-text-stroke:0.2px #000;">99,0</div>
<div class="t" style="left:932.30px;top:355.75px;font-size:12.7px;color:#000;-webkit-text-stroke:0.2px #000;">13,0</div>
<div class="t" style="left:978.80px;top:355.75px;font-size:12.7px;color:#000;-webkit-text-stroke:0.2px #000;">99,0</div>
<div class="t" style="left:1025.80px;top:355.75px;font-size:12.7px;color:#000;-webkit-text-stroke:0.2px #000;">1,00</div>
<div class="t" style="left:1072.80px;top:355.75px;font-size:12.7px;color:#000;-webkit-text-stroke:0.2px #000;">1,00</div>
<div class="t" style="left:1110.91px;top:355.75px;font-size:12.7px;color:#000;-webkit-text-stroke:0.2px #000;">284</div>
<div class="t" style="left:1160.47px;top:355.75px;font-size:12.7px;color:#000;-webkit-text-stroke:0.2px #000;">0</div>
<div class="t" style="left:1220.97px;top:355.75px;font-size:12.7px;color:#000;-webkit-text-stroke:0.2px #000;">0</div>
<div class="t" style="left:1284.47px;top:355.75px;font-size:12.7px;color:#000;-webkit-text-stroke:0.2px #000;">0</div>
<div class="t" style="left:1326.97px;top:355.75px;font-size:12.7px;color:#000;-webkit-text-stroke:0.2px #000;">1</div>
<div class="t" style="left:1368.97px;top:355.75px;font-size:12.7px;color:#000;-webkit-text-stroke:0.2px #000;">3</div>
<div class="t" style="left:783.05px;top:374.75px;font-size:12.7px;color:#000;-webkit-text-stroke:0.2px #000;">Large</div>
<div class="t" style="left:837.80px;top:374.75px;font-size:12.7px;color:#000;-webkit-text-stroke:0.2px #000;">28,0</div>
<div class="t" style="left:878.80px;top:374.75px;font-size:12.7px;color:#000;-webkit-text-stroke:0.2px #000;">99,0</div>
<div class="t" style="left:932.30px;top:374.75px;font-size:12.7px;color:#000;-webkit-text-stroke:0.2px #000;">28,0</div>
<div class="t" style="left:978.80px;top:374.75px;font-size:12.7px;color:#000;-webkit-text-stroke:0.2px #000;">99,0</div>
<div class="t" style="left:1025.80px;top:374.75px;font-size:12.7px;color:#000;-webkit-text-stroke:0.2px #000;">2,40</div>
<div class="t" style="left:1072.80px;top:374.75px;font-size:12.7px;color:#000;-webkit-text-stroke:0.2px #000;">2,40</div>
<div class="t" style="left:1110.91px;top:374.75px;font-size:12.7px;color:#000;-webkit-text-stroke:0.2px #000;">500</div>
<div class="t" style="left:1160.47px;top:374.75px;font-size:12.7px;color:#000;-webkit-text-stroke:0.2px #000;">0</div>
<div class="t" style="left:1220.97px;top:374.75px;font-size:12.7px;color:#000;-webkit-text-stroke:0.2px #000;">0</div>
<div class="t" style="left:1284.47px;top:374.75px;font-size:12.7px;color:#000;-webkit-text-stroke:0.2px #000;">0</div>
<div class="t" style="left:1326.97px;top:374.75px;font-size:12.7px;color:#000;-webkit-text-stroke:0.2px #000;">1</div>
<div class="t" style="left:1368.97px;top:374.75px;font-size:12.7px;color:#000;-webkit-text-stroke:0.2px #000;">3</div>
<div class="t" style="left:790.09px;top:393.75px;font-size:12.7px;color:#000;-webkit-text-stroke:0.2px #000;">Pulp</div>
<div class="t" style="left:844.86px;top:393.75px;font-size:12.7px;color:#000;-webkit-text-stroke:0.2px #000;">8,0</div>
<div class="t" style="left:878.80px;top:393.75px;font-size:12.7px;color:#000;-webkit-text-stroke:0.2px #000;">99,0</div>
<div class="t" style="left:939.36px;top:393.75px;font-size:12.7px;color:#000;-webkit-text-stroke:0.2px #000;">8,0</div>
<div class="t" style="left:978.80px;top:393.75px;font-size:12.7px;color:#000;-webkit-text-stroke:0.2px #000;">99,0</div>
<div class="t" style="left:1025.80px;top:393.75px;font-size:12.7px;color:#000;-webkit-text-stroke:0.2px #000;">2,20</div>
<div class="t" style="left:1072.80px;top:393.75px;font-size:12.7px;color:#000;-webkit-text-stroke:0.2px #000;">2,20</div>
<div class="t" style="left:1114.44px;top:393.75px;font-size:12.7px;color:#000;-webkit-text-stroke:0.2px #000;">40</div>
<div class="t" style="left:1160.47px;top:393.75px;font-size:12.7px;color:#000;-webkit-text-stroke:0.2px #000;">0</div>
<div class="t" style="left:1220.97px;top:393.75px;font-size:12.7px;color:#000;-webkit-text-stroke:0.2px #000;">0</div>
<div class="t" style="left:1284.47px;top:393.75px;font-size:12.7px;color:#000;-webkit-text-stroke:0.2px #000;">0</div>
<div class="t" style="left:1326.97px;top:393.75px;font-size:12.7px;color:#000;-webkit-text-stroke:0.2px #000;">1</div>
<div class="t" style="left:1368.97px;top:393.75px;font-size:12.7px;color:#000;-webkit-text-stroke:0.2px #000;">3</div>
<div class="t" style="left:820.00px;top:508.75px;font-size:12.7px;color:#000;-webkit-text-stroke:0.2px #000;">Padrão</div>
<div class="t" style="left:1102.50px;top:508.75px;font-size:12.7px;color:#000;-webkit-text-stroke:0.2px #000;">Otimizado</div>
<div class="t" style="left:781.09px;top:527.75px;font-size:12.7px;color:#000;-webkit-text-stroke:0.2px #000;">Prod</div>
<div class="t" style="left:834.10px;top:527.75px;font-size:12.7px;color:#000;-webkit-text-stroke:0.2px #000;">Nº</div>
<div class="t" style="left:876.18px;top:527.75px;font-size:12.7px;color:#000;-webkit-text-stroke:0.2px #000;">Vol</div>
<div class="t" style="left:928.47px;top:527.75px;font-size:12.7px;color:#000;-webkit-text-stroke:0.2px #000;">$</div>
<div class="t" style="left:977.06px;top:527.75px;font-size:12.7px;color:#000;-webkit-text-stroke:0.2px #000;">hi</div>
<div class="t" style="left:1024.06px;top:527.75px;font-size:12.7px;color:#000;-webkit-text-stroke:0.2px #000;">di</div>
<div class="t" style="left:1060.48px;top:527.75px;font-size:12.7px;color:#000;-webkit-text-stroke:0.2px #000;">comp</div>
<div class="t" style="left:1114.60px;top:527.75px;font-size:12.7px;color:#000;-webkit-text-stroke:0.2px #000;">Nº</div>
<div class="t" style="left:1155.18px;top:527.75px;font-size:12.7px;color:#000;-webkit-text-stroke:0.2px #000;">Vol</div>
<div class="t" style="left:1220.97px;top:527.75px;font-size:12.7px;color:#000;-webkit-text-stroke:0.2px #000;">$</div>
<div class="t" style="left:1283.06px;top:527.75px;font-size:12.7px;color:#000;-webkit-text-stroke:0.2px #000;">hi</div>
<div class="t" style="left:1325.56px;top:527.75px;font-size:12.7px;color:#000;-webkit-text-stroke:0.2px #000;">di</div>
<div class="t" style="left:1356.98px;top:527.75px;font-size:12.7px;color:#000;-webkit-text-stroke:0.2px #000;">comp</div>
<div class="t" style="left:783.05px;top:546.75px;font-size:12.7px;color:#000;-webkit-text-stroke:0.2px #000;">Pole1</div>
<div class="t" style="left:838.88px;top:546.75px;font-size:12.7px;color:#000;-webkit-text-stroke:0.2px #000;">-</div>
<div class="t" style="left:879.88px;top:546.75px;font-size:12.7px;color:#000;-webkit-text-stroke:0.2px #000;">-</div>
<div class="t" style="left:932.88px;top:546.75px;font-size:12.7px;color:#000;-webkit-text-stroke:0.2px #000;">-</div>
<div class="t" style="left:979.88px;top:546.75px;font-size:12.7px;color:#000;-webkit-text-stroke:0.2px #000;">-</div>
<div class="t" style="left:1026.88px;top:546.75px;font-size:12.7px;color:#000;-webkit-text-stroke:0.2px #000;">-</div>
<div class="t" style="left:1073.88px;top:546.75px;font-size:12.7px;color:#000;-webkit-text-stroke:0.2px #000;">-</div>
<div class="t" style="left:1117.88px;top:546.75px;font-size:12.7px;color:#000;-webkit-text-stroke:0.2px #000;">-</div>
<div class="t" style="left:1158.88px;top:546.75px;font-size:12.7px;color:#000;-webkit-text-stroke:0.2px #000;">-</div>
<div class="t" style="left:1238.88px;top:546.75px;font-size:12.7px;color:#000;-webkit-text-stroke:0.2px #000;">-</div>
<div class="t" style="left:1285.88px;top:546.75px;font-size:12.7px;color:#000;-webkit-text-stroke:0.2px #000;">-</div>
<div class="t" style="left:1323.88px;top:546.75px;font-size:12.7px;color:#000;-webkit-text-stroke:0.2px #000;">-</div>
<div class="t" style="left:1369.88px;top:546.75px;font-size:12.7px;color:#000;-webkit-text-stroke:0.2px #000;">-</div>
<div class="t" style="left:783.05px;top:566.75px;font-size:12.7px;color:#000;-webkit-text-stroke:0.2px #000;">Pole2</div>
<div class="t" style="left:838.88px;top:566.75px;font-size:12.7px;color:#000;-webkit-text-stroke:0.2px #000;">-</div>
<div class="t" style="left:879.88px;top:566.75px;font-size:12.7px;color:#000;-webkit-text-stroke:0.2px #000;">-</div>
<div class="t" style="left:932.88px;top:566.75px;font-size:12.7px;color:#000;-webkit-text-stroke:0.2px #000;">-</div>
<div class="t" style="left:979.88px;top:566.75px;font-size:12.7px;color:#000;-webkit-text-stroke:0.2px #000;">-</div>
<div class="t" style="left:1026.88px;top:566.75px;font-size:12.7px;color:#000;-webkit-text-stroke:0.2px #000;">-</div>
<div class="t" style="left:1073.88px;top:566.75px;font-size:12.7px;color:#000;-webkit-text-stroke:0.2px #000;">-</div>
<div class="t" style="left:1117.88px;top:566.75px;font-size:12.7px;color:#000;-webkit-text-stroke:0.2px #000;">-</div>
<div class="t" style="left:1158.88px;top:566.75px;font-size:12.7px;color:#000;-webkit-text-stroke:0.2px #000;">-</div>
<div class="t" style="left:1238.88px;top:566.75px;font-size:12.7px;color:#000;-webkit-text-stroke:0.2px #000;">-</div>
<div class="t" style="left:1285.88px;top:566.75px;font-size:12.7px;color:#000;-webkit-text-stroke:0.2px #000;">-</div>
<div class="t" style="left:1323.88px;top:566.75px;font-size:12.7px;color:#000;-webkit-text-stroke:0.2px #000;">-</div>
<div class="t" style="left:1369.88px;top:566.75px;font-size:12.7px;color:#000;-webkit-text-stroke:0.2px #000;">-</div>
<div class="t" style="left:783.05px;top:585.75px;font-size:12.7px;color:#000;-webkit-text-stroke:0.2px #000;">Pole3</div>
<div class="t" style="left:838.88px;top:585.75px;font-size:12.7px;color:#000;-webkit-text-stroke:0.2px #000;">-</div>
<div class="t" style="left:879.88px;top:585.75px;font-size:12.7px;color:#000;-webkit-text-stroke:0.2px #000;">-</div>
<div class="t" style="left:932.88px;top:585.75px;font-size:12.7px;color:#000;-webkit-text-stroke:0.2px #000;">-</div>
<div class="t" style="left:979.88px;top:585.75px;font-size:12.7px;color:#000;-webkit-text-stroke:0.2px #000;">-</div>
<div class="t" style="left:1026.88px;top:585.75px;font-size:12.7px;color:#000;-webkit-text-stroke:0.2px #000;">-</div>
<div class="t" style="left:1073.88px;top:585.75px;font-size:12.7px;color:#000;-webkit-text-stroke:0.2px #000;">-</div>
<div class="t" style="left:1117.88px;top:585.75px;font-size:12.7px;color:#000;-webkit-text-stroke:0.2px #000;">-</div>
<div class="t" style="left:1158.88px;top:585.75px;font-size:12.7px;color:#000;-webkit-text-stroke:0.2px #000;">-</div>
<div class="t" style="left:1238.88px;top:585.75px;font-size:12.7px;color:#000;-webkit-text-stroke:0.2px #000;">-</div>
<div class="t" style="left:1285.88px;top:585.75px;font-size:12.7px;color:#000;-webkit-text-stroke:0.2px #000;">-</div>
<div class="t" style="left:1323.88px;top:585.75px;font-size:12.7px;color:#000;-webkit-text-stroke:0.2px #000;">-</div>
<div class="t" style="left:1369.88px;top:585.75px;font-size:12.7px;color:#000;-webkit-text-stroke:0.2px #000;">-</div>
<div class="t" style="left:783.05px;top:604.75px;font-size:12.7px;color:#000;-webkit-text-stroke:0.2px #000;">Pole4</div>
<div class="t" style="left:838.88px;top:604.75px;font-size:12.7px;color:#000;-webkit-text-stroke:0.2px #000;">-</div>
<div class="t" style="left:879.88px;top:604.75px;font-size:12.7px;color:#000;-webkit-text-stroke:0.2px #000;">-</div>
<div class="t" style="left:932.88px;top:604.75px;font-size:12.7px;color:#000;-webkit-text-stroke:0.2px #000;">-</div>
<div class="t" style="left:979.88px;top:604.75px;font-size:12.7px;color:#000;-webkit-text-stroke:0.2px #000;">-</div>
<div class="t" style="left:1026.88px;top:604.75px;font-size:12.7px;color:#000;-webkit-text-stroke:0.2px #000;">-</div>
<div class="t" style="left:1073.88px;top:604.75px;font-size:12.7px;color:#000;-webkit-text-stroke:0.2px #000;">-</div>
<div class="t" style="left:1117.88px;top:604.75px;font-size:12.7px;color:#000;-webkit-text-stroke:0.2px #000;">-</div>
<div class="t" style="left:1158.88px;top:604.75px;font-size:12.7px;color:#000;-webkit-text-stroke:0.2px #000;">-</div>
<div class="t" style="left:1238.88px;top:604.75px;font-size:12.7px;color:#000;-webkit-text-stroke:0.2px #000;">-</div>
<div class="t" style="left:1285.88px;top:604.75px;font-size:12.7px;color:#000;-webkit-text-stroke:0.2px #000;">-</div>
<div class="t" style="left:1323.88px;top:604.75px;font-size:12.7px;color:#000;-webkit-text-stroke:0.2px #000;">-</div>
<div class="t" style="left:1369.88px;top:604.75px;font-size:12.7px;color:#000;-webkit-text-stroke:0.2px #000;">-</div>
<div class="t" style="left:783.05px;top:623.75px;font-size:12.7px;color:#000;-webkit-text-stroke:0.2px #000;">Pole5</div>
<div class="t" style="left:850.94px;top:623.75px;font-size:12.7px;color:#000;-webkit-text-stroke:0.2px #000;">1</div>
<div class="t" style="left:874.30px;top:623.75px;font-size:12.7px;color:#000;-webkit-text-stroke:0.2px #000;">0,73</div>
<div class="t" style="left:913.19px;top:623.75px;font-size:12.7px;color:#000;-webkit-text-stroke:0.2px #000;">333,81</div>
<div class="t" style="left:967.25px;top:623.75px;font-size:12.7px;color:#000;-webkit-text-stroke:0.2px #000;">10,70</div>
<div class="t" style="left:1014.25px;top:623.75px;font-size:12.7px;color:#000;-webkit-text-stroke:0.2px #000;">24,83</div>
<div class="t" style="left:1061.25px;top:623.75px;font-size:12.7px;color:#000;-webkit-text-stroke:0.2px #000;">10,50</div>
<div class="t" style="left:1129.94px;top:623.75px;font-size:12.7px;color:#000;-webkit-text-stroke:0.2px #000;">1</div>
<div class="t" style="left:1153.30px;top:623.75px;font-size:12.7px;color:#000;-webkit-text-stroke:0.2px #000;">0,61</div>
<div class="t" style="left:1219.19px;top:623.75px;font-size:12.7px;color:#000;-webkit-text-stroke:0.2px #000;">279,33</div>
<div class="t" style="left:1273.25px;top:623.75px;font-size:12.7px;color:#000;-webkit-text-stroke:0.2px #000;">13,13</div>
<div class="t" style="left:1323.88px;top:623.75px;font-size:12.7px;color:#000;-webkit-text-stroke:0.2px #000;">-</div>
<div class="t" style="left:1357.25px;top:623.75px;font-size:12.7px;color:#000;-webkit-text-stroke:0.2px #000;">10,50</div>
<div class="t" style="left:783.77px;top:642.75px;font-size:12.7px;color:#000;-webkit-text-stroke:0.2px #000;">Small</div>
<div class="t" style="left:850.94px;top:642.75px;font-size:12.7px;color:#000;-webkit-text-stroke:0.2px #000;">9</div>
<div class="t" style="left:874.30px;top:642.75px;font-size:12.7px;color:#000;-webkit-text-stroke:0.2px #000;">0,27</div>
<div class="t" style="left:920.25px;top:642.75px;font-size:12.7px;color:#000;-webkit-text-stroke:0.2px #000;">75,65</div>
<div class="t" style="left:967.25px;top:642.75px;font-size:12.7px;color:#000;-webkit-text-stroke:0.2px #000;">19,97</div>
<div class="t" style="left:1014.25px;top:642.75px;font-size:12.7px;color:#000;-webkit-text-stroke:0.2px #000;">13,19</div>
<div class="t" style="left:1068.30px;top:642.75px;font-size:12.7px;color:#000;-webkit-text-stroke:0.2px #000;">9,00</div>
<div class="t" style="left:1129.94px;top:642.75px;font-size:12.7px;color:#000;-webkit-text-stroke:0.2px #000;">6</div>
<div class="t" style="left:1153.30px;top:642.75px;font-size:12.7px;color:#000;-webkit-text-stroke:0.2px #000;">0,16</div>
<div class="t" style="left:1226.25px;top:642.75px;font-size:12.7px;color:#000;-webkit-text-stroke:0.2px #000;">44,27</div>
<div class="t" style="left:1273.25px;top:642.75px;font-size:12.7px;color:#000;-webkit-text-stroke:0.2px #000;">19,31</div>
<div class="t" style="left:1323.88px;top:642.75px;font-size:12.7px;color:#000;-webkit-text-stroke:0.2px #000;">-</div>
<div class="t" style="left:1364.30px;top:642.75px;font-size:12.7px;color:#000;-webkit-text-stroke:0.2px #000;">6,00</div>
<div class="t" style="left:783.05px;top:661.75px;font-size:12.7px;color:#000;-webkit-text-stroke:0.2px #000;">Large</div>
<div class="t" style="left:838.88px;top:661.75px;font-size:12.7px;color:#000;-webkit-text-stroke:0.2px #000;">-</div>
<div class="t" style="left:879.88px;top:661.75px;font-size:12.7px;color:#000;-webkit-text-stroke:0.2px #000;">-</div>
<div class="t" style="left:932.88px;top:661.75px;font-size:12.7px;color:#000;-webkit-text-stroke:0.2px #000;">-</div>
<div class="t" style="left:979.88px;top:661.75px;font-size:12.7px;color:#000;-webkit-text-stroke:0.2px #000;">-</div>
<div class="t" style="left:1026.88px;top:661.75px;font-size:12.7px;color:#000;-webkit-text-stroke:0.2px #000;">-</div>
<div class="t" style="left:1073.88px;top:661.75px;font-size:12.7px;color:#000;-webkit-text-stroke:0.2px #000;">-</div>
<div class="t" style="left:1129.94px;top:661.75px;font-size:12.7px;color:#000;-webkit-text-stroke:0.2px #000;">1</div>
<div class="t" style="left:1153.30px;top:661.75px;font-size:12.7px;color:#000;-webkit-text-stroke:0.2px #000;">0,22</div>
<div class="t" style="left:1220.12px;top:661.75px;font-size:12.7px;color:#000;-webkit-text-stroke:0.2px #000;">110,48</div>
<div class="t" style="left:1280.30px;top:661.75px;font-size:12.7px;color:#000;-webkit-text-stroke:0.2px #000;">2,60</div>
<div class="t" style="left:1323.88px;top:661.75px;font-size:12.7px;color:#000;-webkit-text-stroke:0.2px #000;">-</div>
<div class="t" style="left:1364.30px;top:661.75px;font-size:12.7px;color:#000;-webkit-text-stroke:0.2px #000;">2,40</div>
<div class="t" style="left:790.09px;top:681.75px;font-size:12.7px;color:#000;-webkit-text-stroke:0.2px #000;">Pulp</div>
<div class="t" style="left:850.94px;top:681.75px;font-size:12.7px;color:#000;-webkit-text-stroke:0.2px #000;">1</div>
<div class="t" style="left:874.30px;top:681.75px;font-size:12.7px;color:#000;-webkit-text-stroke:0.2px #000;">0,02</div>
<div class="t" style="left:927.30px;top:681.75px;font-size:12.7px;color:#000;-webkit-text-stroke:0.2px #000;">0,91</div>
<div class="t" style="left:967.25px;top:681.75px;font-size:12.7px;color:#000;-webkit-text-stroke:0.2px #000;">22,20</div>
<div class="t" style="left:1021.30px;top:681.75px;font-size:12.7px;color:#000;-webkit-text-stroke:0.2px #000;">9,74</div>
<div class="t" style="left:1068.30px;top:681.75px;font-size:12.7px;color:#000;-webkit-text-stroke:0.2px #000;">2,20</div>
<div class="t" style="left:1129.94px;top:681.75px;font-size:12.7px;color:#000;-webkit-text-stroke:0.2px #000;">1</div>
<div class="t" style="left:1153.30px;top:681.75px;font-size:12.7px;color:#000;-webkit-text-stroke:0.2px #000;">0,03</div>
<div class="t" style="left:1233.30px;top:681.75px;font-size:12.7px;color:#000;-webkit-text-stroke:0.2px #000;">1,08</div>
<div class="t" style="left:1273.25px;top:681.75px;font-size:12.7px;color:#000;-webkit-text-stroke:0.2px #000;">21,54</div>
<div class="t" style="left:1323.88px;top:681.75px;font-size:12.7px;color:#000;-webkit-text-stroke:0.2px #000;">-</div>
<div class="t" style="left:1364.30px;top:681.75px;font-size:12.7px;color:#000;-webkit-text-stroke:0.2px #000;">2,20</div>
<div class="t" style="left:844.83px;top:796.75px;font-size:12.7px;color:#000;-webkit-text-stroke:0.2px #000;">11</div>
<div class="t" style="left:874.30px;top:796.75px;font-size:12.7px;color:#000;-webkit-text-stroke:0.2px #000;">1,02</div>
<div class="t" style="left:913.19px;top:796.75px;font-size:12.7px;color:#000;-webkit-text-stroke:0.2px #000;">410,37</div>
<div class="t" style="left:967.25px;top:796.75px;font-size:12.7px;color:#000;-webkit-text-stroke:0.2px #000;">22,20</div>
<div class="t" style="left:1061.25px;top:796.75px;font-size:12.7px;color:#000;-webkit-text-stroke:0.2px #000;">21,70</div>
<div class="t" style="left:1129.94px;top:796.75px;font-size:12.7px;color:#000;-webkit-text-stroke:0.2px #000;">9</div>
<div class="t" style="left:1153.30px;top:796.75px;font-size:12.7px;color:#000;-webkit-text-stroke:0.2px #000;">1,01</div>
<div class="t" style="left:1219.19px;top:796.75px;font-size:12.7px;color:#000;-webkit-text-stroke:0.2px #000;">435,16</div>
<div class="t" style="left:1273.25px;top:796.75px;font-size:12.7px;color:#000;-webkit-text-stroke:0.2px #000;">21,54</div>
<div class="t" style="left:1357.25px;top:796.75px;font-size:12.7px;color:#000;-webkit-text-stroke:0.2px #000;">21,10</div>
<div class="t" style="left:1226.25px;top:815.75px;font-size:12.7px;color:#000;-webkit-text-stroke:0.2px #000;">24,78</div>
<div class="t" style="left:1233.58px;top:834.75px;font-size:12.7px;color:#000;-webkit-text-stroke:0.2px #000;">6,0%</div>
<svg style="left:43px;top:237px" width="292" height="627" viewBox="0 0 292 627"><rect x="0" y="0" width="292" height="627" fill="#fff7d6"/><rect x="20.5" y="12.5" width="241" height="585.0" fill="#fff" stroke="#d9d9d9" stroke-width="1"/><line x1="60.5" y1="12.5" x2="60.5" y2="597.5" stroke="#d9d9d9" stroke-width="1"/><line x1="100.5" y1="12.5" x2="100.5" y2="597.5" stroke="#d9d9d9" stroke-width="1"/><line x1="141.5" y1="12.5" x2="141.5" y2="597.5" stroke="#d9d9d9" stroke-width="1"/><line x1="181.5" y1="12.5" x2="181.5" y2="597.5" stroke="#d9d9d9" stroke-width="1"/><line x1="221.5" y1="12.5" x2="221.5" y2="597.5" stroke="#d9d9d9" stroke-width="1"/><line x1="20.5" y1="500.5" x2="261.5" y2="500.5" stroke="#d9d9d9" stroke-width="1"/><line x1="20.5" y1="402.5" x2="261.5" y2="402.5" stroke="#d9d9d9" stroke-width="1"/><line x1="20.5" y1="305.5" x2="261.5" y2="305.5" stroke="#d9d9d9" stroke-width="1"/><line x1="20.5" y1="207.5" x2="261.5" y2="207.5" stroke="#d9d9d9" stroke-width="1"/><line x1="20.5" y1="110.5" x2="261.5" y2="110.5" stroke="#d9d9d9" stroke-width="1"/><line x1="20.5" y1="597.5" x2="261.5" y2="597.5" stroke="#bfbfbf" stroke-width="1"/></svg>
<svg style="left:43px;top:237px" width="292" height="627" viewBox="0 0 292 627"><line x1="36.57" y1="572.5" x2="245.43" y2="572.5" stroke="#1f5a17" stroke-width="1.4" stroke-dasharray="7.4 3.4"/><line x1="65.63" y1="595.46" x2="216.37" y2="595.46" stroke="#ff0000" stroke-width="1.6"/><line x1="92.37" y1="388.5" x2="189.63" y2="388.5" stroke="#000" stroke-width="1.15"/><line x1="94.59" y1="368.5" x2="187.41" y2="368.5" stroke="#000" stroke-width="1.15"/><line x1="96.98" y1="348.5" x2="185.02" y2="348.5" stroke="#000" stroke-width="1.15"/><line x1="99.51" y1="328.5" x2="182.49" y2="328.5" stroke="#000" stroke-width="1.15"/><line x1="102.12" y1="308.5" x2="179.88" y2="308.5" stroke="#000" stroke-width="1.15"/><line x1="104.79" y1="288.5" x2="177.21" y2="288.5" stroke="#000" stroke-width="1.15"/><line x1="107.48" y1="268.5" x2="174.52" y2="268.5" stroke="#000" stroke-width="1.15"/><line x1="110.20" y1="248.5" x2="171.80" y2="248.5" stroke="#000" stroke-width="1.15"/><line x1="112.95" y1="228.5" x2="169.05" y2="228.5" stroke="#000" stroke-width="1.15"/><line x1="115.78" y1="208.5" x2="166.22" y2="208.5" stroke="#000" stroke-width="1.15"/><line x1="122.75" y1="164.5" x2="159.25" y2="164.5" stroke="#000" stroke-width="1.15"/><path d="M64.85,597.50 L66.23,593.27 L67.51,589.05 L68.71,584.83 L69.83,580.60 L70.88,576.38 L71.85,572.15 L72.77,567.92 L73.62,563.70 L74.41,559.48 L75.15,555.25 L75.84,551.02 L76.49,546.80 L77.10,542.58 L77.67,538.35 L78.21,534.12 L78.71,529.90 L79.19,525.67 L79.64,521.45 L80.07,517.23 L80.47,513.00 L80.87,508.77 L81.24,504.55 L81.60,500.33 L81.96,496.10 L82.30,491.88 L82.64,487.65 L82.97,483.42 L83.29,479.20 L83.62,474.98 L83.94,470.75 L84.26,466.52 L84.58,462.30 L84.91,458.08 L85.24,453.85 L85.57,449.62 L85.91,445.40 L86.26,441.17 L86.61,436.95 L86.97,432.73 L87.33,428.50 L87.70,424.27 L88.08,420.05 L88.47,415.83 L88.87,411.60 L89.28,407.38 L89.69,403.15 L90.12,398.92 L90.55,394.70 L90.99,390.48 L91.44,386.25 L91.90,382.02 L92.36,377.80 L92.84,373.58 L93.32,369.35 L93.81,365.12 L94.31,360.90 L94.81,356.67 L95.32,352.45 L95.83,348.23 L96.36,344.00 L96.88,339.77 L97.42,335.55 L97.95,331.33 L98.49,327.10 L99.04,322.88 L99.59,318.65 L100.14,314.42 L100.69,310.20 L101.25,305.98 L101.81,301.75 L102.37,297.53 L102.93,293.30 L103.50,289.08 L104.06,284.85 L104.63,280.62 L105.20,276.40 L105.76,272.18 L106.33,267.95 L106.90,263.72 L107.47,259.50 L108.04,255.27 L108.61,251.05 L109.19,246.82 L109.76,242.60 L110.34,238.38 L110.92,234.15 L111.50,229.92 L112.08,225.70 L112.67,221.47 L113.27,217.25 L113.87,213.03 L114.48,208.80 L115.09,204.58 L115.72,200.35 L116.35,196.12 L116.99,191.90 L117.65,187.68 L118.33,183.45 L119.01,179.23 L119.72,175.00 L120.45,170.78 L121.19,166.55 L121.96,162.32 L122.76,158.10 L123.59,153.88 L124.44,149.65 L125.33,145.43 L126.26,141.20 L127.23,136.97 L128.23,132.75 L129.29,128.52 L130.39,124.30 L131.55,120.07 L132.76,115.85 L134.03,111.62 L135.36,107.40 L136.77,103.17 L138.25,98.95 L139.80,94.72 L141.44,90.50 L140.56,90.50 L142.20,94.72 L143.75,98.95 L145.23,103.17 L146.64,107.40 L147.97,111.62 L149.24,115.85 L150.45,120.07 L151.61,124.30 L152.71,128.52 L153.77,132.75 L154.77,136.97 L155.74,141.20 L156.67,145.43 L157.56,149.65 L158.41,153.88 L159.24,158.10 L160.04,162.32 L160.81,166.55 L161.55,170.78 L162.28,175.00 L162.99,179.23 L163.67,183.45 L164.35,187.68 L165.01,191.90 L165.65,196.12 L166.28,200.35 L166.91,204.58 L167.52,208.80 L168.13,213.03 L168.73,217.25 L169.33,221.47 L169.92,225.70 L170.50,229.92 L171.08,234.15 L171.66,238.38 L172.24,242.60 L172.81,246.82 L173.39,251.05 L173.96,255.27 L174.53,259.50 L175.10,263.72 L175.67,267.95 L176.24,272.18 L176.80,276.40 L177.37,280.62 L177.94,284.85 L178.50,289.08 L179.07,293.30 L179.63,297.53 L180.19,301.75 L180.75,305.98 L181.31,310.20 L181.86,314.42 L182.41,318.65 L182.96,322.88 L183.51,327.10 L184.05,331.33 L184.58,335.55 L185.12,339.77 L185.64,344.00 L186.17,348.23 L186.68,352.45 L187.19,356.67 L187.69,360.90 L188.19,365.12 L188.68,369.35 L189.16,373.58 L189.64,377.80 L190.10,382.02 L190.56,386.25 L191.01,390.48 L191.45,394.70 L191.88,398.92 L192.31,403.15 L192.72,407.38 L193.13,411.60 L193.53,415.83 L193.92,420.05 L194.30,424.27 L194.67,428.50 L195.03,432.73 L195.39,436.95 L195.74,441.17 L196.09,445.40 L196.43,449.62 L196.76,453.85 L197.09,458.08 L197.42,462.30 L197.74,466.52 L198.06,470.75 L198.38,474.98 L198.71,479.20 L199.03,483.42 L199.36,487.65 L199.70,491.88 L200.04,496.10 L200.40,500.33 L200.76,504.55 L201.13,508.77 L201.53,513.00 L201.93,517.23 L202.36,521.45 L202.81,525.67 L203.29,529.90 L203.79,534.12 L204.33,538.35 L204.90,542.58 L205.51,546.80 L206.16,551.02 L206.85,555.25 L207.59,559.48 L208.38,563.70 L209.23,567.92 L210.15,572.15 L211.12,576.38 L212.17,580.60 L213.29,584.83 L214.49,589.05 L215.77,593.27 L217.15,597.50" fill="none" stroke="#a8400c" stroke-width="2" stroke-linejoin="round"/></svg>
<div class="t" style="left:158.39px;top:257.03px;font-size:16.5px;color:#595959;">Padrão</div>
<div class="t" style="left:313.80px;top:829.01px;font-size:10.5px;color:#505050;">0</div>
<div class="t" style="left:313.80px;top:731.51px;font-size:10.5px;color:#505050;">5</div>
<div class="t" style="left:313.80px;top:634.01px;font-size:10.5px;color:#505050;">10</div>
<div class="t" style="left:313.80px;top:536.51px;font-size:10.5px;color:#505050;">15</div>
<div class="t" style="left:313.80px;top:439.01px;font-size:10.5px;color:#505050;">20</div>
<div class="t" style="left:313.80px;top:341.51px;font-size:10.5px;color:#505050;">25</div>
<div class="t" style="left:313.80px;top:244.01px;font-size:10.5px;color:#505050;">30</div>
<div class="t" style="left:55.91px;top:844.11px;font-size:10.5px;color:#505050;">-30</div>
<div class="t" style="left:96.07px;top:844.11px;font-size:10.5px;color:#505050;">-20</div>
<div class="t" style="left:136.24px;top:844.11px;font-size:10.5px;color:#505050;">-10</div>
<div class="t" style="left:181.08px;top:844.11px;font-size:10.5px;color:#505050;">0</div>
<div class="t" style="left:218.32px;top:844.11px;font-size:10.5px;color:#505050;">10</div>
<div class="t" style="left:258.49px;top:844.11px;font-size:10.5px;color:#505050;">20</div>
<div class="t" style="left:298.66px;top:844.11px;font-size:10.5px;color:#505050;">30</div>
<svg style="left:355px;top:237px" width="290" height="627" viewBox="0 0 290 627"><rect x="0" y="0" width="290" height="627" fill="#fff7d6"/><rect x="20.5" y="12.5" width="238" height="585.0" fill="#fff" stroke="#d9d9d9" stroke-width="1"/><line x1="60.5" y1="12.5" x2="60.5" y2="597.5" stroke="#d9d9d9" stroke-width="1"/><line x1="99.5" y1="12.5" x2="99.5" y2="597.5" stroke="#d9d9d9" stroke-width="1"/><line x1="139.5" y1="12.5" x2="139.5" y2="597.5" stroke="#d9d9d9" stroke-width="1"/><line x1="179.5" y1="12.5" x2="179.5" y2="597.5" stroke="#d9d9d9" stroke-width="1"/><line x1="218.5" y1="12.5" x2="218.5" y2="597.5" stroke="#d9d9d9" stroke-width="1"/><line x1="20.5" y1="500.5" x2="258.5" y2="500.5" stroke="#d9d9d9" stroke-width="1"/><line x1="20.5" y1="402.5" x2="258.5" y2="402.5" stroke="#d9d9d9" stroke-width="1"/><line x1="20.5" y1="305.5" x2="258.5" y2="305.5" stroke="#d9d9d9" stroke-width="1"/><line x1="20.5" y1="207.5" x2="258.5" y2="207.5" stroke="#d9d9d9" stroke-width="1"/><line x1="20.5" y1="110.5" x2="258.5" y2="110.5" stroke="#d9d9d9" stroke-width="1"/><line x1="20.5" y1="597.5" x2="258.5" y2="597.5" stroke="#bfbfbf" stroke-width="1"/></svg>
<svg style="left:355px;top:237px" width="290" height="627" viewBox="0 0 290 627"><line x1="36.37" y1="572.5" x2="242.63" y2="572.5" stroke="#1f5a17" stroke-width="1.4" stroke-dasharray="7.4 3.4"/><line x1="65.06" y1="595.46" x2="213.94" y2="595.46" stroke="#ff0000" stroke-width="1.6"/><line x1="76.99" y1="546.5" x2="202.01" y2="546.5" stroke="#000" stroke-width="1.15"/><line x1="96.91" y1="341.5" x2="182.09" y2="341.5" stroke="#000" stroke-width="1.15"/><line x1="99.44" y1="321.5" x2="179.56" y2="321.5" stroke="#000" stroke-width="1.15"/><line x1="102.05" y1="301.5" x2="176.95" y2="301.5" stroke="#000" stroke-width="1.15"/><line x1="104.69" y1="281.5" x2="174.31" y2="281.5" stroke="#000" stroke-width="1.15"/><line x1="107.36" y1="261.5" x2="171.64" y2="261.5" stroke="#000" stroke-width="1.15"/><line x1="110.05" y1="241.5" x2="168.95" y2="241.5" stroke="#000" stroke-width="1.15"/><line x1="112.79" y1="220.5" x2="166.21" y2="220.5" stroke="#000" stroke-width="1.15"/><line x1="119.26" y1="177.5" x2="159.74" y2="177.5" stroke="#000" stroke-width="1.15"/><path d="M64.30,597.50 L65.66,593.27 L66.93,589.05 L68.11,584.83 L69.22,580.60 L70.25,576.38 L71.22,572.15 L72.11,567.92 L72.95,563.70 L73.74,559.48 L74.47,555.25 L75.15,551.02 L75.80,546.80 L76.39,542.58 L76.96,538.35 L77.49,534.12 L77.98,529.90 L78.46,525.67 L78.90,521.45 L79.32,517.23 L79.73,513.00 L80.11,508.77 L80.49,504.55 L80.84,500.33 L81.19,496.10 L81.53,491.88 L81.86,487.65 L82.19,483.42 L82.51,479.20 L82.83,474.98 L83.15,470.75 L83.47,466.52 L83.79,462.30 L84.11,458.08 L84.43,453.85 L84.76,449.62 L85.10,445.40 L85.44,441.17 L85.79,436.95 L86.14,432.73 L86.50,428.50 L86.87,424.27 L87.24,420.05 L87.63,415.83 L88.02,411.60 L88.42,407.38 L88.83,403.15 L89.25,398.92 L89.68,394.70 L90.11,390.48 L90.56,386.25 L91.01,382.02 L91.47,377.80 L91.94,373.58 L92.41,369.35 L92.90,365.12 L93.39,360.90 L93.88,356.67 L94.39,352.45 L94.90,348.23 L95.41,344.00 L95.93,339.77 L96.46,335.55 L96.99,331.33 L97.52,327.10 L98.06,322.88 L98.60,318.65 L99.15,314.42 L99.70,310.20 L100.25,305.98 L100.80,301.75 L101.35,297.53 L101.91,293.30 L102.46,289.08 L103.02,284.85 L103.58,280.62 L104.14,276.40 L104.70,272.18 L105.26,267.95 L105.82,263.72 L106.39,259.50 L106.95,255.27 L107.52,251.05 L108.08,246.82 L108.65,242.60 L109.22,238.38 L109.79,234.15 L110.37,229.92 L110.94,225.70 L111.53,221.47 L112.11,217.25 L112.71,213.03 L113.31,208.80 L113.91,204.58 L114.53,200.35 L115.16,196.12 L115.79,191.90 L116.44,187.68 L117.11,183.45 L117.79,179.23 L118.48,175.00 L119.20,170.78 L119.94,166.55 L120.70,162.32 L121.49,158.10 L122.30,153.88 L123.15,149.65 L124.03,145.43 L124.94,141.20 L125.90,136.97 L126.89,132.75 L127.93,128.52 L129.02,124.30 L130.16,120.07 L131.36,115.85 L132.62,111.62 L133.93,107.40 L135.32,103.17 L136.78,98.95 L138.31,94.72 L139.93,90.50 L139.07,90.50 L140.69,94.72 L142.22,98.95 L143.68,103.17 L145.07,107.40 L146.38,111.62 L147.64,115.85 L148.84,120.07 L149.98,124.30 L151.07,128.52 L152.11,132.75 L153.10,136.97 L154.06,141.20 L154.97,145.43 L155.85,149.65 L156.70,153.88 L157.51,158.10 L158.30,162.32 L159.06,166.55 L159.80,170.78 L160.52,175.00 L161.21,179.23 L161.89,183.45 L162.56,187.68 L163.21,191.90 L163.84,196.12 L164.47,200.35 L165.09,204.58 L165.69,208.80 L166.29,213.03 L166.89,217.25 L167.47,221.47 L168.06,225.70 L168.63,229.92 L169.21,234.15 L169.78,238.38 L170.35,242.60 L170.92,246.82 L171.48,251.05 L172.05,255.27 L172.61,259.50 L173.18,263.72 L173.74,267.95 L174.30,272.18 L174.86,276.40 L175.42,280.62 L175.98,284.85 L176.54,289.08 L177.09,293.30 L177.65,297.53 L178.20,301.75 L178.75,305.98 L179.30,310.20 L179.85,314.42 L180.40,318.65 L180.94,322.88 L181.48,327.10 L182.01,331.33 L182.54,335.55 L183.07,339.77 L183.59,344.00 L184.10,348.23 L184.61,352.45 L185.12,356.67 L185.61,360.90 L186.10,365.12 L186.59,369.35 L187.06,373.58 L187.53,377.80 L187.99,382.02 L188.44,386.25 L188.89,390.48 L189.32,394.70 L189.75,398.92 L190.17,403.15 L190.58,407.38 L190.98,411.60 L191.37,415.83 L191.76,420.05 L192.13,424.27 L192.50,428.50 L192.86,432.73 L193.21,436.95 L193.56,441.17 L193.90,445.40 L194.24,449.62 L194.57,453.85 L194.89,458.08 L195.21,462.30 L195.53,466.52 L195.85,470.75 L196.17,474.98 L196.49,479.20 L196.81,483.42 L197.14,487.65 L197.47,491.88 L197.81,496.10 L198.16,500.33 L198.51,504.55 L198.89,508.77 L199.27,513.00 L199.68,517.23 L200.10,521.45 L200.54,525.67 L201.02,529.90 L201.51,534.12 L202.04,538.35 L202.61,542.58 L203.20,546.80 L203.85,551.02 L204.53,555.25 L205.26,559.48 L206.05,563.70 L206.89,567.92 L207.78,572.15 L208.75,576.38 L209.78,580.60 L210.89,584.83 L212.07,589.05 L213.34,593.27 L214.70,597.50" fill="none" stroke="#a8400c" stroke-width="2" stroke-linejoin="round"/></svg>
<div class="t" style="left:470.36px;top:257.03px;font-size:16.5px;color:#595959;">Otimizado</div>
<div class="t" style="left:622.80px;top:829.01px;font-size:10.5px;color:#505050;">0</div>
<div class="t" style="left:622.80px;top:731.51px;font-size:10.5px;color:#505050;">5</div>
<div class="t" style="left:622.80px;top:634.01px;font-size:10.5px;color:#505050;">10</div>
<div class="t" style="left:622.80px;top:536.51px;font-size:10.5px;color:#505050;">15</div>
<div class="t" style="left:622.80px;top:439.01px;font-size:10.5px;color:#505050;">20</div>
<div class="t" style="left:622.80px;top:341.51px;font-size:10.5px;color:#505050;">25</div>
<div class="t" style="left:622.80px;top:244.01px;font-size:10.5px;color:#505050;">30</div>
<div class="t" style="left:367.91px;top:844.11px;font-size:10.5px;color:#505050;">-30</div>
<div class="t" style="left:407.57px;top:844.11px;font-size:10.5px;color:#505050;">-20</div>
<div class="t" style="left:447.24px;top:844.11px;font-size:10.5px;color:#505050;">-10</div>
<div class="t" style="left:491.58px;top:844.11px;font-size:10.5px;color:#505050;">0</div>
<div class="t" style="left:528.32px;top:844.11px;font-size:10.5px;color:#505050;">10</div>
<div class="t" style="left:567.99px;top:844.11px;font-size:10.5px;color:#505050;">20</div>
<div class="t" style="left:607.66px;top:844.11px;font-size:10.5px;color:#505050;">30</div>
<svg style="left:10px;top:62px" width="40" height="40" viewBox="10 62 40 40"><line x1="18.5" y1="76" x2="18.5" y2="97" stroke="#a80f14" stroke-width="1.1"/><path d="M16.5 97.5h4" stroke="#a80f14" stroke-width="1.1"/><line x1="25.5" y1="76" x2="25.5" y2="97" stroke="#a80f14" stroke-width="1.1"/><path d="M23.5 97.5h4" stroke="#a80f14" stroke-width="1.1"/><line x1="32.5" y1="76" x2="32.5" y2="97" stroke="#a80f14" stroke-width="1.1"/><path d="M30.5 97.5h4" stroke="#a80f14" stroke-width="1.1"/><line x1="37.5" y1="76" x2="37.5" y2="97" stroke="#a80f14" stroke-width="1.1"/><path d="M35.5 97.5h4" stroke="#a80f14" stroke-width="1.1"/><line x1="43.5" y1="76" x2="43.5" y2="97" stroke="#a80f14" stroke-width="1.1"/><path d="M41.5 97.5h4" stroke="#a80f14" stroke-width="1.1"/><path d="M18.5 67L21.9 70.3V74.3L18.5 77.5L15.1 74.3V70.3z" fill="#008a12"/><path d="M25.5 67L28.9 70.3V74.3L25.5 77.5L22.1 74.3V70.3z" fill="#008a12"/><path d="M32.5 67L35.9 70.3V74.3L32.5 77.5L29.1 74.3V70.3z" fill="#008a12"/><path d="M37.5 67L40.9 70.3V74.3L37.5 77.5L34.1 74.3V70.3z" fill="#008a12"/><path d="M43.5 67L46.9 70.3V74.3L43.5 77.5L40.1 74.3V70.3z" fill="#008a12"/><rect x="15.5" y="70.5" width="30.5" height="3.5" fill="#008a12"/></svg>
<svg style="left:55px;top:62px" width="45" height="40" viewBox="55 62 45 40"><path d="M69.5 67L76.3 73.8H62.7z" fill="#008a12"/><path d="M69.5 73.5V97.5M67.5 79V97.5M67 97.5h3" stroke="#a80f14" stroke-width="1.1" fill="none"/><path d="M64.5 86V97.5" stroke="#c01818" stroke-width="1.1"/><path d="M63 87l1.5-2 1.5 2z" fill="#20a040"/><path d="M64.5 80l2-2 1 2z" fill="#b09020"/><path d="M66.3 78.5l1.3-2 1.3 2z" fill="#20a040"/><circle cx="70.3" cy="79.8" r="1" fill="#20c060"/><path d="M74.5 84V97.5" stroke="#c01818" stroke-width="1.1"/><path d="M72.5 85l2-2 1.5 1.5z" fill="#20a040"/><path d="M75 83.5l2 1-2 1z" fill="#f02020"/><path d="M77.5 90V97.5M79.5 89V97.5" stroke="#d06060" stroke-width="1"/><circle cx="77.5" cy="91" r="0.9" fill="#a02020"/><circle cx="77.5" cy="94" r="0.9" fill="#a02020"/><circle cx="80.2" cy="89.2" r="1.7" fill="#20b050"/><rect x="80" y="88.5" width="1.5" height="2.5" fill="#f01010"/><path d="M85.7 67C82 67 79.3 71 79.3 76S82.2 85 85.7 85S92.1 81 92.1 76S89.4 67 85.7 67z" fill="#008a12"/><path d="M79.5 78C80.5 82.5 83 85 85.7 85S91 82.5 91.9 78z" fill="#1a90a8"/><path d="M85.5 70.5V83M84 73l2 1.5 2-1M83.5 77l2 1 2.5-1.5M84 81l1.5 1 1.5-1" stroke="#e01010" stroke-width="1.3" fill="none"/><path d="M85.5 85V96" stroke="#a80f14" stroke-width="1.1"/><path d="M83 97.8l2.5-3 2.5 3z" fill="#a80f14"/><path d="M92.5 82V97.5" stroke="#a80f14" stroke-width="1.1"/><ellipse cx="93" cy="84" rx="1.3" ry="2.2" fill="#f01010"/><path d="M91 82l1-2.5 1 2z" fill="#8a9a20"/></svg>
<svg style="left:119px;top:69px" width="18" height="28" viewBox="0 0 18 28"><rect x="1" y="1" width="16" height="26" fill="#fff" stroke="#111" stroke-width="1.3"/><rect x="3.5" y="3.5" width="11" height="4" fill="#1f8ad8"/><rect x="4.5" y="4.3" width="9" height="2" fill="#6cc0ff"/><rect x="3.5" y="10.3" width="2.6" height="2.6" fill="#111"/><rect x="8.0" y="10.3" width="2.6" height="2.6" fill="#111"/><rect x="12.5" y="10.3" width="2.6" height="2.6" fill="#111"/><rect x="3.5" y="15.8" width="2.6" height="2.6" fill="#111"/><rect x="8.0" y="15.8" width="2.6" height="2.6" fill="#111"/><rect x="12.5" y="15.8" width="2.6" height="2.6" fill="#111"/><rect x="3.5" y="21.3" width="2.6" height="2.6" fill="#111"/><rect x="8.0" y="21.3" width="2.6" height="2.6" fill="#111"/><rect x="12.5" y="21.3" width="2.6" height="2.6" fill="#111"/></svg>
<svg style="left:159px;top:68px" width="31" height="31" viewBox="0 0 31 31"><rect x="1" y="1" width="26" height="26" fill="#fff" stroke="#3a3a3a" stroke-width="1.4"/><rect x="1.5" y="1.5" width="25" height="4" fill="#c8c8c8"/><line x1="1" y1="5.8" x2="27" y2="5.8" stroke="#3a3a3a" stroke-width="1"/><line x1="10.5" y1="6" x2="10.5" y2="27" stroke="#777" stroke-width="1"/><line x1="19" y1="6" x2="19" y2="10" stroke="#777" stroke-width="1"/><line x1="1" y1="13" x2="19" y2="13" stroke="#777" stroke-width="1"/><line x1="1" y1="19.5" x2="19" y2="19.5" stroke="#777" stroke-width="1"/><path d="M17 11.5L29.5 10V29.5L17 28z" fill="#0e7a3c"/><path d="M19.8 15.5h2.4l1.4 2.6 1.4-2.6h2.4l-2.6 4.4 2.7 4.6h-2.4l-1.5-2.7-1.5 2.7h-2.4l2.7-4.6z" fill="#fff"/></svg>
<svg style="left:214px;top:69px" width="28" height="28" viewBox="0 0 28 28"><path d="M5.5 1H1.5V27H5.5M22.5 1H26.5V27H22.5" fill="none" stroke="#333" stroke-width="1.2"/><text x="14" y="12.5" font-family="Liberation Serif" font-size="13" text-anchor="middle" fill="#222" letter-spacing="2.5">10</text><text x="14" y="25" font-family="Liberation Serif" font-size="13" text-anchor="middle" fill="#222" letter-spacing="2.5">01</text></svg>
<svg style="left:262px;top:64px" width="38" height="36" viewBox="262 64 38 36"><path d="M267.5 70.5V96.5H297" fill="none" stroke="#111" stroke-width="2.4"/><path d="M268.5 73.5l1.3 1.2-1.3 1.2M268.5 78l1.3 1.2-1.3 1.2M268.5 82.5l1.3 1.2-1.3 1.2M268.5 87l1.3 1.2-1.3 1.2M268.5 91.5l1.3 1.2-1.3 1.2" fill="none" stroke="#111" stroke-width="1.2"/><path d="M269.4 93.6L297 77.2" fill="none" stroke="#7a8a3a" stroke-width="1.7"/><path d="M268.2 76.8L271.9 77.6L274.3 81.3L276.4 84.6L279.3 88.7" fill="none" stroke="#ff1010" stroke-width="2"/><path d="M285.9 87L290.8 82.5L296.6 79.6" fill="none" stroke="#ff1010" stroke-width="2.2"/><path d="M275 76L279.5 70H286.5L290.3 74V77.3L285 82V87" fill="none" stroke="#111" stroke-width="3"/><ellipse cx="283.6" cy="91.9" rx="2.2" ry="1.6" fill="#111"/></svg>
<svg style="left:350px;top:67px" width="33" height="32" viewBox="0 0 33 32"><path d="M2 1V30H31" fill="none" stroke="#111" stroke-width="2"/><path d="M3 2L13 14L18.5 21.5L20 29" fill="none" stroke="#8b4513" stroke-width="2"/><path d="M3 8L9.5 18L14.5 29" fill="none" stroke="#f07020" stroke-width="1.8"/><path d="M3 13.5L6.5 22L9.5 29" fill="none" stroke="#0a9a30" stroke-width="1.9"/><path d="M3 24.5L5.5 29" fill="none" stroke="#f04010" stroke-width="1.6"/></svg>
<svg style="left:446px;top:64px" width="34" height="34" viewBox="0 0 34 34"><text x="2" y="25.5" font-family="Liberation Serif" font-style="italic" font-size="28" fill="#333">f</text><text x="12" y="25.5" font-family="Liberation Serif" font-style="italic" font-size="24" fill="#333">x</text></svg>
<svg style="left:516px;top:66.5px" width="17" height="17" viewBox="0 0 17 17"><rect x="0.7" y="0.7" width="14" height="14" fill="#fff" stroke="#3a3a3a" stroke-width="1.2"/><line x1="0.7" y1="3.2" x2="14.7" y2="3.2" stroke="#3a3a3a" stroke-width="1.2"/><line x1="5" y1="3.5" x2="5" y2="15" stroke="#888" stroke-width="0.9"/><line x1="0.7" y1="7.5" x2="9" y2="7.5" stroke="#888" stroke-width="0.9"/><line x1="0.7" y1="11" x2="9" y2="11" stroke="#888" stroke-width="0.9"/><path d="M8.5 6.5L16 5.5V16L8.5 15z" fill="#0e7a3c"/><path d="M10 8.3h1.5l.9 1.6.9-1.6h1.5l-1.6 2.6 1.6 2.7h-1.5l-.9-1.6-.9 1.6H10l1.6-2.7z" fill="#fff"/></svg>
<svg style="left:516px;top:88.5px" width="17" height="17" viewBox="0 0 17 17"><rect x="0.7" y="0.7" width="14" height="14" fill="#fff" stroke="#3a3a3a" stroke-width="1.2"/><line x1="0.7" y1="3.2" x2="14.7" y2="3.2" stroke="#3a3a3a" stroke-width="1.2"/><line x1="5" y1="3.5" x2="5" y2="15" stroke="#888" stroke-width="0.9"/><line x1="0.7" y1="7.5" x2="9" y2="7.5" stroke="#888" stroke-width="0.9"/><line x1="0.7" y1="11" x2="9" y2="11" stroke="#888" stroke-width="0.9"/><path d="M8.5 6.5L16 5.5V16L8.5 15z" fill="#0e7a3c"/><path d="M10 8.3h1.5l.9 1.6.9-1.6h1.5l-1.6 2.6 1.6 2.7h-1.5l-.9-1.6-.9 1.6H10l1.6-2.7z" fill="#fff"/></svg>
<svg style="left:516px;top:110.5px" width="17" height="17" viewBox="0 0 17 17"><rect x="0.7" y="0.7" width="14" height="14" fill="#fff" stroke="#3a3a3a" stroke-width="1.2"/><line x1="0.7" y1="3.2" x2="14.7" y2="3.2" stroke="#3a3a3a" stroke-width="1.2"/><line x1="5" y1="3.5" x2="5" y2="15" stroke="#888" stroke-width="0.9"/><line x1="0.7" y1="7.5" x2="9" y2="7.5" stroke="#888" stroke-width="0.9"/><line x1="0.7" y1="11" x2="9" y2="11" stroke="#888" stroke-width="0.9"/><path d="M8.5 6.5L16 5.5V16L8.5 15z" fill="#0e7a3c"/><path d="M10 8.3h1.5l.9 1.6.9-1.6h1.5l-1.6 2.6 1.6 2.7h-1.5l-.9-1.6-.9 1.6H10l1.6-2.7z" fill="#fff"/></svg>
<svg style="left:646px;top:66.5px" width="17" height="17" viewBox="0 0 17 17"><rect x="0.7" y="0.7" width="14" height="14" fill="#fff" stroke="#3a3a3a" stroke-width="1.2"/><line x1="0.7" y1="3.2" x2="14.7" y2="3.2" stroke="#3a3a3a" stroke-width="1.2"/><line x1="5" y1="3.5" x2="5" y2="15" stroke="#888" stroke-width="0.9"/><line x1="0.7" y1="7.5" x2="9" y2="7.5" stroke="#888" stroke-width="0.9"/><line x1="0.7" y1="11" x2="9" y2="11" stroke="#888" stroke-width="0.9"/><path d="M8.5 6.5L16 5.5V16L8.5 15z" fill="#0e7a3c"/><path d="M10 8.3h1.5l.9 1.6.9-1.6h1.5l-1.6 2.6 1.6 2.7h-1.5l-.9-1.6-.9 1.6H10l1.6-2.7z" fill="#fff"/></svg>
<svg style="left:646px;top:88.5px" width="17" height="17" viewBox="0 0 17 17"><rect x="0.7" y="0.7" width="14" height="14" fill="#fff" stroke="#3a3a3a" stroke-width="1.2"/><line x1="0.7" y1="3.2" x2="14.7" y2="3.2" stroke="#3a3a3a" stroke-width="1.2"/><line x1="5" y1="3.5" x2="5" y2="15" stroke="#888" stroke-width="0.9"/><line x1="0.7" y1="7.5" x2="9" y2="7.5" stroke="#888" stroke-width="0.9"/><line x1="0.7" y1="11" x2="9" y2="11" stroke="#888" stroke-width="0.9"/><path d="M8.5 6.5L16 5.5V16L8.5 15z" fill="#0e7a3c"/><path d="M10 8.3h1.5l.9 1.6.9-1.6h1.5l-1.6 2.6 1.6 2.7h-1.5l-.9-1.6-.9 1.6H10l1.6-2.7z" fill="#fff"/></svg>
<svg style="left:646px;top:110.5px" width="17" height="17" viewBox="0 0 17 17"><rect x="0.7" y="0.7" width="14" height="14" fill="#fff" stroke="#3a3a3a" stroke-width="1.2"/><line x1="0.7" y1="3.2" x2="14.7" y2="3.2" stroke="#3a3a3a" stroke-width="1.2"/><line x1="5" y1="3.5" x2="5" y2="15" stroke="#888" stroke-width="0.9"/><line x1="0.7" y1="7.5" x2="9" y2="7.5" stroke="#888" stroke-width="0.9"/><line x1="0.7" y1="11" x2="9" y2="11" stroke="#888" stroke-width="0.9"/><path d="M8.5 6.5L16 5.5V16L8.5 15z" fill="#0e7a3c"/><path d="M10 8.3h1.5l.9 1.6.9-1.6h1.5l-1.6 2.6 1.6 2.7h-1.5l-.9-1.6-.9 1.6H10l1.6-2.7z" fill="#fff"/></svg>
<svg style="left:918px;top:64px" width="42" height="38" viewBox="918 64 42 38"><path d="M925.5 71.5H935.5Q938.5 71.5 938.5 74.5Q938.5 71.5 941.5 71.5H952.5V92.5H941.5L938.5 94.5L935.5 92.5H925.5z" fill="#fff" stroke="#222" stroke-width="1"/><path d="M938.5 74.5V94" stroke="#222" stroke-width="1"/><path d="M928.3 82.6L932.3 86.6L941.8 77.1" fill="none" stroke="#1fbf6e" stroke-width="1.5"/><circle cx="947.4" cy="90.5" r="7.6" fill="#fff"/><circle cx="947.4" cy="90.5" r="6.8" fill="none" stroke="#1a86d6" stroke-width="1.3"/><ellipse cx="947.4" cy="90.5" rx="3" ry="6.8" fill="none" stroke="#1a86d6" stroke-width="1.1"/><path d="M940.6 90.5h13.6M941.5 87.2h11.8M941.5 93.8h11.8" stroke="#1a86d6" stroke-width="1.1"/></svg>
<svg style="left:975px;top:64px" width="32" height="38" viewBox="975 64 32 38"><path d="M979.5 69.5H990.7L998.5 77.7V95.5H979.5z" fill="#fff" stroke="#222" stroke-width="1.1"/><path d="M990.5 69.5V77.5H998.5" fill="#fff" stroke="#222" stroke-width="1"/><rect x="994.5" y="79" width="11" height="19" fill="#fbfaf9"/><path d="M979.5 95.5H993.5" stroke="#222" stroke-width="1.1"/><circle cx="1000.1" cy="84.4" r="4.2" fill="#fff" stroke="#ff4848" stroke-width="1.3"/><path d="M996.5 88.5V97L999.9 93.3L1003.5 97V88.5" fill="#fff" stroke="#ff4848" stroke-width="1.2"/></svg>
<svg style="left:1015px;top:64px" width="38" height="38" viewBox="1015 64 38 38"><path d="M1028 66.8L1040 66.6L1046.5 70.5L1050 78L1050 88L1046 95.5L1038 98.5L1030 98.5L1022 94.5L1018.5 87L1018.8 77L1022 70.5z" fill="#1464d8"/><path d="M1021 79Q1026 74 1032.5 72.5" fill="none" stroke="#fff" stroke-width="1.3"/><path d="M1020.5 88.5Q1028 79 1041 77.5Q1047 77 1050 79" fill="none" stroke="#fff" stroke-width="1.5"/><path d="M1027.5 94.5Q1030 90 1033 88" fill="none" stroke="#fff" stroke-width="1.3"/><path d="M1040.3 79V97.5" stroke="#fff" stroke-width="1.2"/><path d="M1042 69.5L1046.5 73" stroke="#fff" stroke-width="1.1"/><path d="M1045 87L1048 84.5" stroke="#fff" stroke-width="1.1"/></svg>
<svg style="left:1064px;top:72px" width="28" height="20" viewBox="0 0 28 20"><rect x="1" y="1.5" width="16" height="11" rx="5.5" fill="none" stroke="#444" stroke-width="1.3"/><rect x="10" y="7.5" width="16" height="11" rx="5.5" fill="none" stroke="#444" stroke-width="1.3"/></svg>
</div></body></html>
